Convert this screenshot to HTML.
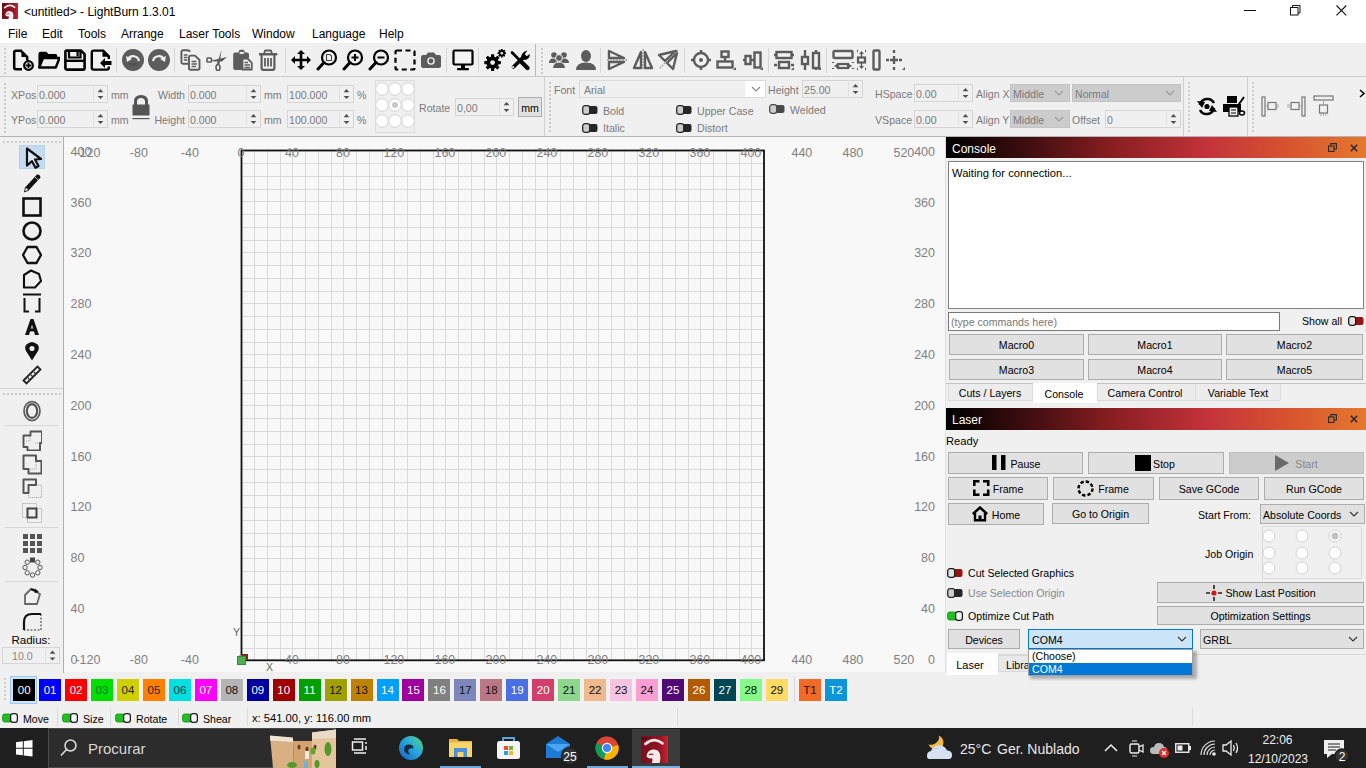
<!DOCTYPE html><html><head><meta charset="utf-8"><title>LightBurn</title><style>
html,body{margin:0;padding:0;}body{width:1366px;height:768px;overflow:hidden;position:relative;background:#f0f0f0;font-family:"Liberation Sans", sans-serif;}
.a{position:absolute;white-space:nowrap;}
</style></head><body>
<div class="a" style="left:0px;top:0px;width:1366px;height:22px;background:#ffffff;"></div>
<svg class="a" style="left:2px;top:3px;" width="16" height="16" viewBox="0 0 24 24"><defs><linearGradient id="lg1" x1="0" y1="0" x2="1" y2="0"><stop offset="0" stop-color="#7a0f1e"/><stop offset="0.7" stop-color="#8e1525"/><stop offset="1" stop-color="#d4202c"/></linearGradient></defs><rect x="0" y="0" width="24" height="24" fill="url(#lg1)"/><path d="M0 1.5 H10 Q4 2 2 4 Z" fill="#2a0508" opacity="0.7"/><path d="M4 7 Q12 0.5 19 6.5" fill="none" stroke="#f6e6e6" stroke-width="2.4" stroke-linecap="round"/><path d="M5 18.5 Q5 13 10 12 Q15 11.5 16.5 15 Q18 19 16.5 24 H9.5 Q11 21 9.5 19.5 Q7.5 21 5 18.5 Z" fill="#f5eaea"/><path d="M7 17 Q9 15.5 11 16.5" stroke="#8e1525" stroke-width="1" fill="none"/></svg>
<div class="a" style="left:24px;top:5.6px;font-size:12px;line-height:12px;color:#000;">&lt;untitled&gt; - LightBurn 1.3.01</div>
<div class="a" style="left:1244px;top:10px;width:12px;height:1px;background:#111;"></div>
<svg class="a" style="left:1290px;top:5px;" width="11" height="11" viewBox="0 0 11 11"><rect x="0.5" y="2.5" width="7.5" height="7.5" fill="none" stroke="#111"/><path d="M2.5 2.5 V0.5 H10 V8 H8" fill="none" stroke="#111"/></svg>
<svg class="a" style="left:1336px;top:5px;" width="11" height="11" viewBox="0 0 11 11"><path d="M0.5 0.5 L10.3 10.3 M10.3 0.5 L0.5 10.3" stroke="#111" stroke-width="1.1"/></svg>
<div class="a" style="left:0px;top:22px;width:1366px;height:21px;background:#ffffff;"></div>
<div class="a" style="left:8px;top:28.3px;font-size:12px;line-height:12px;color:#000;">File</div>
<div class="a" style="left:42px;top:28.3px;font-size:12px;line-height:12px;color:#000;">Edit</div>
<div class="a" style="left:78px;top:28.3px;font-size:12px;line-height:12px;color:#000;">Tools</div>
<div class="a" style="left:121px;top:28.3px;font-size:12px;line-height:12px;color:#000;">Arrange</div>
<div class="a" style="left:179px;top:28.3px;font-size:12px;line-height:12px;color:#000;">Laser Tools</div>
<div class="a" style="left:252px;top:28.3px;font-size:12px;line-height:12px;color:#000;">Window</div>
<div class="a" style="left:312px;top:28.3px;font-size:12px;line-height:12px;color:#000;">Language</div>
<div class="a" style="left:379px;top:28.3px;font-size:12px;line-height:12px;color:#000;">Help</div>
<div class="a" style="left:0px;top:43px;width:1366px;height:33px;background:#f0f0f0;"></div>
<div class="a" style="left:0px;top:76px;width:1366px;height:1px;background:#cacaca;"></div>
<svg class="a" style="left:4px;top:48px;" width="2" height="26" viewBox="0 0 2 26"><rect x="0" y="0" width="2" height="2" fill="#cbcbcb"/><rect x="0" y="4" width="2" height="2" fill="#cbcbcb"/><rect x="0" y="8" width="2" height="2" fill="#cbcbcb"/><rect x="0" y="12" width="2" height="2" fill="#cbcbcb"/><rect x="0" y="16" width="2" height="2" fill="#cbcbcb"/><rect x="0" y="20" width="2" height="2" fill="#cbcbcb"/><rect x="0" y="24" width="2" height="2" fill="#cbcbcb"/></svg>
<svg class="a" style="left:12px;top:49px;" width="22" height="22" viewBox="0 0 22 22"><path d="M10 1.8 H4 Q2.2 1.8 2.2 3.6 V18.5 Q2.2 20.2 4 20.2 H10" fill="none" stroke="#000" stroke-width="2.5"/><path d="M9 1.8 L15.2 8 V11.5" fill="none" stroke="#000" stroke-width="2.5"/><path d="M9.5 1.5 V8 H15.5 Z" fill="#000"/><circle cx="16.5" cy="16.5" r="4.3" fill="#f0f0f0" stroke="#000" stroke-width="2.3"/><path d="M16.5 14 V19 M14 16.5 H19" stroke="#000" stroke-width="1.8"/></svg>
<svg class="a" style="left:38px;top:49px;" width="22" height="22" viewBox="0 0 22 22"><path d="M1.2 18 V5 Q1.2 3.5 2.7 3.5 H8 L10 5.8 H17.5 Q18.5 5.8 18.5 7 V9" fill="#000" stroke="#000" stroke-width="1.5"/><path d="M1.2 18.5 L5 9 H21.5 L17.8 18.5 Z" fill="#f0f0f0" stroke="#000" stroke-width="2.4" stroke-linejoin="round"/></svg>
<svg class="a" style="left:64px;top:49px;" width="22" height="22" viewBox="0 0 22 22"><path d="M2.6 1.6 H17 L20.6 5.2 V19 Q20.6 20.6 19 20.6 H3 Q1.4 20.6 1.4 19 V2.8 Q1.4 1.6 2.6 1.6 Z" fill="none" stroke="#000" stroke-width="2.6"/><path d="M5 1.6 V8.5 H16.5 V1.6" fill="none" stroke="#000" stroke-width="2.2"/><rect x="12.5" y="3" width="2.2" height="4.3" fill="#000"/><rect x="2" y="10.6" width="18" height="2.4" fill="#000"/></svg>
<svg class="a" style="left:90px;top:49px;" width="22" height="22" viewBox="0 0 22 22"><path d="M18.8 10 V7.2 L13.2 1.6 H3.6 Q1.8 1.6 1.8 3.4 V18.8 Q1.8 20.6 3.6 20.6 H17 Q18.8 20.6 18.8 18.8 V17.5" fill="none" stroke="#000" stroke-width="2.4"/><path d="M12.5 1.5 V7.8 H18.8 Z" fill="#000"/><path d="M21.5 12 H15 V9 L10 14 L15 19 V16 H21.5 Z" fill="#000"/></svg>
<svg class="a" style="left:122px;top:49px;" width="22" height="22" viewBox="0 0 22 22"><circle cx="11" cy="11" r="11" fill="#5c5c5c"/><path d="M6 10 A6 6 0 0 1 17 12" fill="none" stroke="#f0f0f0" stroke-width="2.2"/><path d="M4 7 L5 13 L10 10 Z" fill="#f0f0f0"/><path d="M5 14 Q11 20 17 14 Z" fill="#505050"/></svg>
<svg class="a" style="left:148px;top:49px;" width="22" height="22" viewBox="0 0 22 22"><circle cx="11" cy="11" r="11" fill="#5c5c5c"/><path d="M16 10 A6 6 0 0 0 5 12" fill="none" stroke="#f0f0f0" stroke-width="2.2"/><path d="M18 7 L17 13 L12 10 Z" fill="#f0f0f0"/></svg>
<svg class="a" style="left:180px;top:49px;" width="22" height="22" viewBox="0 0 22 22"><path d="M9.5 3 Q9.5 1.2 7.8 1.2 H3.2 Q1.4 1.2 1.4 3 V13 Q1.4 14.8 3.2 14.8 H8" fill="none" stroke="#5c5c5c" stroke-width="1.9"/><path d="M3.8 6 H7.5 M3.8 8.5 H7.5 M3.8 11 H7.5" stroke="#5c5c5c" stroke-width="1.3"/><path d="M9 8.2 Q9 6.6 10.6 6.6 H15 L19.5 11 V19 Q19.5 20.8 17.8 20.8 H10.6 Q9 20.8 9 19 Z" fill="#f0f0f0" stroke="#5c5c5c" stroke-width="1.9" stroke-linejoin="round"/><path d="M11.5 12.5 H16.5 M11.5 15 H17 M11.5 17.5 H16" stroke="#5c5c5c" stroke-width="1.4"/></svg>
<svg class="a" style="left:206px;top:49px;" width="22" height="22" viewBox="0 0 22 22"><rect x="1" y="9" width="4.5" height="4" rx="0.8" fill="#f0f0f0" stroke="#5c5c5c" stroke-width="1.6"/><path d="M5.5 11.5 L21 8 L16 12.5 L8 12.5 Z" fill="#5c5c5c"/><path d="M10.5 16 L15.5 1 L13.5 15 Z" fill="#5c5c5c"/><ellipse cx="12" cy="18.5" rx="2" ry="3" fill="#f0f0f0" stroke="#5c5c5c" stroke-width="1.6"/></svg>
<svg class="a" style="left:232px;top:49px;" width="22" height="22" viewBox="0 0 22 22"><path d="M3 3.5 H7 V2 Q7 0.8 8.2 0.8 H11 Q12.2 0.8 12.2 2 V3.5 H15 Q17 3.5 17 5.5 V9 H10 V21 H3 Q1.2 21 1.2 19 V5.5 Q1.2 3.5 3 3.5 Z" fill="#5c5c5c"/><rect x="7.2" y="2.5" width="5" height="2.8" fill="#f0f0f0" stroke="#5c5c5c" stroke-width="0.8"/><path d="M10.5 9.5 H15.5 L19.8 13.8 V20.5 H10.5 Z" fill="#f0f0f0" stroke="#5c5c5c" stroke-width="1.8" stroke-linejoin="round"/><path d="M12.5 13.5 H16 M12.5 16 H18 M12.5 18.5 H18" stroke="#5c5c5c" stroke-width="1.4"/></svg>
<svg class="a" style="left:259px;top:49px;" width="22" height="22" viewBox="0 0 22 22"><path d="M0.8 5.2 H17.2" stroke="#5c5c5c" stroke-width="2.4" stroke-linecap="round"/><path d="M5.5 5 V2.8 Q5.5 1.5 6.8 1.5 H11.2 Q12.5 1.5 12.5 2.8 V5" fill="none" stroke="#5c5c5c" stroke-width="1.8"/><path d="M2.6 6 V19 Q2.6 20.8 4.4 20.8 H13.6 Q15.4 20.8 15.4 19 V6" fill="none" stroke="#5c5c5c" stroke-width="2.2"/><path d="M6 9 V17.5 M9 9 V17.5 M12 9 V17.5" stroke="#5c5c5c" stroke-width="1.8"/></svg>
<svg class="a" style="left:290px;top:49px;" width="22" height="22" viewBox="0 0 22 22"><path d="M11 1 L15 5 H12.3 V9.7 H17 V7 L21 11 L17 15 V12.3 H12.3 V17 H15 L11 21 L7 17 H9.7 V12.3 H5 V15 L1 11 L5 7 V9.7 H9.7 V5 H7 Z" fill="#000"/></svg>
<svg class="a" style="left:316px;top:49px;" width="22" height="22" viewBox="0 0 22 22"><circle cx="13" cy="8.5" r="7" fill="none" stroke="#000" stroke-width="2.2"/><path d="M8 13.5 L2 20" stroke="#000" stroke-width="3" stroke-linecap="round"/><path d="M10.5 5.5 H14 L15.5 7 V11.5 H10.5 Z" fill="none" stroke="#444" stroke-width="1.1"/></svg>
<svg class="a" style="left:342px;top:49px;" width="22" height="22" viewBox="0 0 22 22"><circle cx="13" cy="8.5" r="7" fill="none" stroke="#000" stroke-width="2.2"/><path d="M8 13.5 L2 20" stroke="#000" stroke-width="3" stroke-linecap="round"/><path d="M13 5 V12 M9.5 8.5 H16.5" stroke="#000" stroke-width="2"/></svg>
<svg class="a" style="left:368px;top:49px;" width="22" height="22" viewBox="0 0 22 22"><circle cx="13" cy="8.5" r="7" fill="none" stroke="#000" stroke-width="2.2"/><path d="M8 13.5 L2 20" stroke="#000" stroke-width="3" stroke-linecap="round"/><path d="M9.5 8.5 H16.5" stroke="#000" stroke-width="2"/></svg>
<svg class="a" style="left:394px;top:49px;" width="22" height="22" viewBox="0 0 22 22"><rect x="1.5" y="1.5" width="19" height="19" rx="1.5" fill="none" stroke="#000" stroke-width="2.2" stroke-dasharray="5 3.5"/></svg>
<svg class="a" style="left:420px;top:49px;" width="22" height="22" viewBox="0 0 22 22"><path d="M1 8 Q1 6 3 6 H6 L8 3.5 H14 L16 6 H19 Q21 6 21 8 V17 Q21 19 19 19 H3 Q1 19 1 17 Z" fill="#5c5c5c"/><circle cx="11" cy="12" r="3.8" fill="#f0f0f0"/><circle cx="11" cy="12" r="2.4" fill="#5c5c5c"/></svg>
<svg class="a" style="left:452px;top:49px;" width="22" height="22" viewBox="0 0 22 22"><rect x="1.5" y="1.5" width="19" height="14" rx="1" fill="#f4f4f4" stroke="#000" stroke-width="2.2"/><rect x="9" y="16" width="4" height="3" fill="#000"/><rect x="5" y="19" width="12" height="2.2" rx="1" fill="#000"/></svg>
<svg class="a" style="left:484px;top:49px;" width="22" height="22" viewBox="0 0 22 22"><rect x="7.00" y="5.30" width="3.20" height="3.60" rx="0.6" fill="#000" transform="rotate(0.0 8.6 13.6)"/><rect x="7.00" y="5.30" width="3.20" height="3.60" rx="0.6" fill="#000" transform="rotate(45.0 8.6 13.6)"/><rect x="7.00" y="5.30" width="3.20" height="3.60" rx="0.6" fill="#000" transform="rotate(90.0 8.6 13.6)"/><rect x="7.00" y="5.30" width="3.20" height="3.60" rx="0.6" fill="#000" transform="rotate(135.0 8.6 13.6)"/><rect x="7.00" y="5.30" width="3.20" height="3.60" rx="0.6" fill="#000" transform="rotate(180.0 8.6 13.6)"/><rect x="7.00" y="5.30" width="3.20" height="3.60" rx="0.6" fill="#000" transform="rotate(225.0 8.6 13.6)"/><rect x="7.00" y="5.30" width="3.20" height="3.60" rx="0.6" fill="#000" transform="rotate(270.0 8.6 13.6)"/><rect x="7.00" y="5.30" width="3.20" height="3.60" rx="0.6" fill="#000" transform="rotate(315.0 8.6 13.6)"/><circle cx="8.6" cy="13.6" r="6.2" fill="#000"/><circle cx="8.6" cy="13.6" r="2.4" fill="#f0f0f0"/><rect x="16.90" y="-0.10" width="1.80" height="2.70" rx="0.6" fill="#000" transform="rotate(0.0 17.8 4.2)"/><rect x="16.90" y="-0.10" width="1.80" height="2.70" rx="0.6" fill="#000" transform="rotate(45.0 17.8 4.2)"/><rect x="16.90" y="-0.10" width="1.80" height="2.70" rx="0.6" fill="#000" transform="rotate(90.0 17.8 4.2)"/><rect x="16.90" y="-0.10" width="1.80" height="2.70" rx="0.6" fill="#000" transform="rotate(135.0 17.8 4.2)"/><rect x="16.90" y="-0.10" width="1.80" height="2.70" rx="0.6" fill="#000" transform="rotate(180.0 17.8 4.2)"/><rect x="16.90" y="-0.10" width="1.80" height="2.70" rx="0.6" fill="#000" transform="rotate(225.0 17.8 4.2)"/><rect x="16.90" y="-0.10" width="1.80" height="2.70" rx="0.6" fill="#000" transform="rotate(270.0 17.8 4.2)"/><rect x="16.90" y="-0.10" width="1.80" height="2.70" rx="0.6" fill="#000" transform="rotate(315.0 17.8 4.2)"/><circle cx="17.8" cy="4.2" r="3.1" fill="#000"/><circle cx="17.8" cy="4.2" r="1.3" fill="#f0f0f0"/></svg>
<svg class="a" style="left:509px;top:49px;" width="22" height="22" viewBox="0 0 22 22"><path d="M3 3.5 L12.5 13" stroke="#000" stroke-width="2.6" stroke-linecap="round"/><path d="M12 12.5 L18.5 19" stroke="#000" stroke-width="4.2" stroke-linecap="round"/><path d="M4.5 18 L14 8.5" stroke="#000" stroke-width="3.6" stroke-linecap="round"/><path d="M12 9 Q12 3 18.5 1.5 L15.8 5 L17.5 7.2 L21 5 Q20.5 11 14.5 11 Z" fill="#000"/><circle cx="4.2" cy="18.2" r="1.1" fill="#f0f0f0"/></svg>
<svg class="a" style="left:548px;top:49px;" width="22" height="22" viewBox="0 0 22 22"><circle cx="6" cy="6" r="2.8" fill="#5c5c5c"/><path d="M1 14 Q1 9 6 9.5 Q9 10 9 14 Z" fill="#5c5c5c"/><circle cx="16" cy="6" r="2.8" fill="#5c5c5c"/><path d="M12 14 Q13 9.5 16 9.5 Q21 9.5 21 14 Z" fill="#5c5c5c"/><circle cx="11" cy="9" r="3.4" fill="#5c5c5c" stroke="#f0f0f0" stroke-width="1"/><path d="M4.5 19.5 Q5 13 11 13 Q17 13 17.5 19.5 Z" fill="#5c5c5c" stroke="#f0f0f0" stroke-width="1"/></svg>
<svg class="a" style="left:575px;top:49px;" width="22" height="22" viewBox="0 0 22 22"><ellipse cx="11" cy="7" rx="5" ry="6" fill="#5c5c5c"/><path d="M1 21 Q1 13.5 11 13.5 Q21 13.5 21 21 Z" fill="#5c5c5c"/></svg>
<svg class="a" style="left:607px;top:49px;" width="22" height="22" viewBox="0 0 22 22"><path d="M2 2 L17 9 H2 Z M2 13 H17 L2 20 Z" fill="none" stroke="#5c5c5c" stroke-width="2.4" stroke-linejoin="round"/><path d="M0 11 H20" stroke="#9a9a9a" stroke-width="1.5" stroke-dasharray="2 1"/></svg>
<svg class="a" style="left:632px;top:49px;" width="22" height="22" viewBox="0 0 22 22"><path d="M9 3 V19 H2 Z M13 3 V19 H20 Z" fill="none" stroke="#5c5c5c" stroke-width="2.4" stroke-linejoin="round"/><path d="M11 0 V21" stroke="#9a9a9a" stroke-width="1.5" stroke-dasharray="2 1"/></svg>
<svg class="a" style="left:657px;top:49px;" width="22" height="22" viewBox="0 0 22 22"><path d="M2 6 L19 2 L8 12 Z M20 4 L16 20 L10 14 Z" fill="none" stroke="#5c5c5c" stroke-width="2.4" stroke-linejoin="round"/><path d="M21 1 L2 20" stroke="#9a9a9a" stroke-width="1.2" stroke-dasharray="2 1"/></svg>
<svg class="a" style="left:690px;top:49px;" width="22" height="22" viewBox="0 0 22 22"><circle cx="11" cy="11" r="7" fill="none" stroke="#5c5c5c" stroke-width="2.4"/><circle cx="11" cy="11" r="2" fill="#5c5c5c"/><path d="M11 1 V4.5 M11 17.5 V21 M1 11 H4.5 M17.5 11 H21" stroke="#5c5c5c" stroke-width="2.4"/></svg>
<svg class="a" style="left:716px;top:49px;" width="22" height="22" viewBox="0 0 22 22"><rect x="5.5" y="2.5" width="7" height="5.5" fill="none" stroke="#5c5c5c" stroke-width="2.4"/><path d="M9 8 V12" stroke="#5c5c5c" stroke-width="2.4"/><rect x="1.5" y="12.5" width="15" height="6" fill="none" stroke="#5c5c5c" stroke-width="2.4"/><path d="M17 21 L20 21 L20 18 Z" fill="#5c5c5c"/></svg>
<svg class="a" style="left:742px;top:49px;" width="22" height="22" viewBox="0 0 22 22"><path d="M1 11 H4" stroke="#5c5c5c" stroke-width="2.4"/><rect x="3.5" y="7" width="5" height="8" fill="none" stroke="#5c5c5c" stroke-width="2.4"/><path d="M8.5 11 H12" stroke="#5c5c5c" stroke-width="2.4"/><rect x="12.5" y="3.5" width="6" height="15" fill="none" stroke="#5c5c5c" stroke-width="2.4"/><path d="M18 21 L21 21 L21 18 Z" fill="#5c5c5c"/></svg>
<svg class="a" style="left:773px;top:49px;" width="22" height="22" viewBox="0 0 22 22"><path d="M1 6 H4 M18 6 H21 M1 16 H4 M18 16 H21" stroke="#5c5c5c" stroke-width="2.4"/><rect x="3.5" y="3" width="15" height="6" fill="none" stroke="#5c5c5c" stroke-width="2.4"/><rect x="6" y="13" width="10" height="6" fill="none" stroke="#5c5c5c" stroke-width="2.4"/><path d="M18 21 L21 21 L21 18 Z" fill="#5c5c5c"/></svg>
<svg class="a" style="left:800px;top:49px;" width="22" height="22" viewBox="0 0 22 22"><path d="M5 1 V21 M16 1 V21" stroke="#5c5c5c" stroke-width="2.4"/><rect x="2" y="8" width="6" height="7" fill="#f0f0f0" stroke="#5c5c5c" stroke-width="2.4"/><rect x="13" y="4" width="6" height="15" fill="#f0f0f0" stroke="#5c5c5c" stroke-width="2.4"/><path d="M18 21 L21 21 L21 18 Z" fill="#5c5c5c"/></svg>
<svg class="a" style="left:832px;top:49px;" width="22" height="22" viewBox="0 0 22 22"><rect x="1.5" y="2" width="19" height="7" rx="1" fill="none" stroke="#5c5c5c" stroke-width="2.4"/><path d="M1 13 V14 M1 19 V20 M21 13 V14 M21 19 V20" stroke="#5c5c5c" stroke-width="2.4"/><path d="M2 17 L5 15 V19 Z M20 17 L17 15 V19 Z" fill="#5c5c5c"/><rect x="6" y="15" width="10" height="4" fill="none" stroke="#5c5c5c" stroke-width="2.2"/></svg>
<svg class="a" style="left:856px;top:49px;" width="22" height="22" viewBox="0 0 22 22"><path d="M1 2 H2 M9 2 H10 M1 20 H2 M9 20 H10" stroke="#5c5c5c" stroke-width="2.4"/><path d="M5.5 2 L3 5 H8 Z M5.5 20 L3 17 H8 Z" fill="#5c5c5c"/><rect x="2" y="8.5" width="7" height="5" fill="none" stroke="#5c5c5c" stroke-width="2.2"/><path d="M5.5 5 V8.5 M5.5 13.5 V17" stroke="#5c5c5c" stroke-width="1.4"/></svg>
<svg class="a" style="left:872px;top:49px;" width="22" height="22" viewBox="0 0 22 22"><rect x="1.5" y="1.5" width="6" height="19" rx="1" fill="none" stroke="#5c5c5c" stroke-width="2.4"/></svg>
<svg class="a" style="left:885px;top:49px;" width="22" height="22" viewBox="0 0 22 22"><path d="M9 1 V4 M9 7 V15 M9 18 V21 M1 11 H4 M5 11 H13 M14 11 H17" stroke="#5c5c5c" stroke-width="2.4"/><path d="M17 21 L20 21 L20 18 Z" fill="#5c5c5c"/></svg>
<div class="a" style="left:116px;top:48px;width:1px;height:25px;background:#d6d6d6;"></div>
<div class="a" style="left:174px;top:48px;width:1px;height:25px;background:#d6d6d6;"></div>
<div class="a" style="left:285px;top:48px;width:1px;height:25px;background:#d6d6d6;"></div>
<div class="a" style="left:446px;top:48px;width:1px;height:25px;background:#d6d6d6;"></div>
<div class="a" style="left:478px;top:48px;width:1px;height:25px;background:#d6d6d6;"></div>
<div class="a" style="left:535px;top:44px;width:1px;height:32px;background:#b8b8b8;"></div>
<svg class="a" style="left:541px;top:48px;" width="2" height="26" viewBox="0 0 2 26"><rect x="0" y="0" width="2" height="2" fill="#cbcbcb"/><rect x="0" y="4" width="2" height="2" fill="#cbcbcb"/><rect x="0" y="8" width="2" height="2" fill="#cbcbcb"/><rect x="0" y="12" width="2" height="2" fill="#cbcbcb"/><rect x="0" y="16" width="2" height="2" fill="#cbcbcb"/><rect x="0" y="20" width="2" height="2" fill="#cbcbcb"/><rect x="0" y="24" width="2" height="2" fill="#cbcbcb"/></svg>
<div class="a" style="left:600px;top:48px;width:1px;height:25px;background:#d6d6d6;"></div>
<div class="a" style="left:684px;top:48px;width:1px;height:25px;background:#d6d6d6;"></div>
<div class="a" style="left:768px;top:48px;width:1px;height:25px;background:#d6d6d6;"></div>
<div class="a" style="left:826px;top:48px;width:1px;height:25px;background:#d6d6d6;"></div>
<div class="a" style="left:0px;top:77px;width:1366px;height:59px;background:#f0f0f0;"></div>
<div class="a" style="left:0px;top:136px;width:1366px;height:1px;background:#b4b4b4;"></div>
<svg class="a" style="left:4px;top:83px;" width="2" height="50" viewBox="0 0 2 50"><rect x="0" y="0" width="2" height="2" fill="#cbcbcb"/><rect x="0" y="4" width="2" height="2" fill="#cbcbcb"/><rect x="0" y="8" width="2" height="2" fill="#cbcbcb"/><rect x="0" y="12" width="2" height="2" fill="#cbcbcb"/><rect x="0" y="16" width="2" height="2" fill="#cbcbcb"/><rect x="0" y="20" width="2" height="2" fill="#cbcbcb"/><rect x="0" y="24" width="2" height="2" fill="#cbcbcb"/><rect x="0" y="28" width="2" height="2" fill="#cbcbcb"/><rect x="0" y="32" width="2" height="2" fill="#cbcbcb"/><rect x="0" y="36" width="2" height="2" fill="#cbcbcb"/><rect x="0" y="40" width="2" height="2" fill="#cbcbcb"/><rect x="0" y="44" width="2" height="2" fill="#cbcbcb"/><rect x="0" y="48" width="2" height="2" fill="#cbcbcb"/></svg>
<div class="a" style="left:11px;top:89.7px;font-size:10.6px;line-height:10.6px;color:#7a7a7a;">XPos</div>
<div class="a" style="left:37px;top:85px;width:71px;height:18px;background:#f0f0f0;border:1px solid #d5d5d5;box-sizing:border-box;"></div>
<div class="a" style="left:39px;top:89.7px;font-size:10.6px;line-height:10.6px;color:#7a7a7a;">0.000</div>
<div class="a" style="left:93px;top:87px;width:1px;height:14px;background:#e0e0e0;"></div>
<svg class="a" style="left:94px;top:85px;" width="14" height="18" viewBox="0 0 14 18"><path d="M3.6 7.2 L6.5 4.1 L9.4 7.2 Z M3.6 11.0 L6.5 14.1 L9.4 11.0 Z" fill="#505050"/></svg>
<div class="a" style="left:11px;top:114.7px;font-size:10.6px;line-height:10.6px;color:#7a7a7a;">YPos</div>
<div class="a" style="left:37px;top:110px;width:71px;height:18px;background:#f0f0f0;border:1px solid #d5d5d5;box-sizing:border-box;"></div>
<div class="a" style="left:39px;top:114.7px;font-size:10.6px;line-height:10.6px;color:#7a7a7a;">0.000</div>
<div class="a" style="left:93px;top:112px;width:1px;height:14px;background:#e0e0e0;"></div>
<svg class="a" style="left:94px;top:110px;" width="14" height="18" viewBox="0 0 14 18"><path d="M3.6 7.2 L6.5 4.1 L9.4 7.2 Z M3.6 11.0 L6.5 14.1 L9.4 11.0 Z" fill="#505050"/></svg>
<div class="a" style="left:111px;top:89.7px;font-size:10.6px;line-height:10.6px;color:#7a7a7a;">mm</div>
<div class="a" style="left:111px;top:114.7px;font-size:10.6px;line-height:10.6px;color:#7a7a7a;">mm</div>
<svg class="a" style="left:131px;top:95px;" width="20" height="25" viewBox="0 0 20 25"><path d="M4.5 10 V6.5 Q4.5 1.5 10 1.5 Q15.5 1.5 15.5 6.5 V10" fill="none" stroke="#555" stroke-width="3"/><rect x="1.5" y="9.5" width="17" height="11" fill="#555"/><rect x="1.5" y="23" width="17" height="1.2" fill="#555"/></svg>
<div class="a" style="left:-15.0px;width:200px;text-align:right;top:89.7px;font-size:10.6px;line-height:10.6px;color:#7a7a7a;">Width</div>
<div class="a" style="left:188px;top:85px;width:73px;height:18px;background:#f0f0f0;border:1px solid #d5d5d5;box-sizing:border-box;"></div>
<div class="a" style="left:190px;top:89.7px;font-size:10.6px;line-height:10.6px;color:#7a7a7a;">0.000</div>
<div class="a" style="left:246px;top:87px;width:1px;height:14px;background:#e0e0e0;"></div>
<svg class="a" style="left:247px;top:85px;" width="14" height="18" viewBox="0 0 14 18"><path d="M3.6 7.2 L6.5 4.1 L9.4 7.2 Z M3.6 11.0 L6.5 14.1 L9.4 11.0 Z" fill="#505050"/></svg>
<div class="a" style="left:-15.0px;width:200px;text-align:right;top:114.7px;font-size:10.6px;line-height:10.6px;color:#7a7a7a;">Height</div>
<div class="a" style="left:188px;top:110px;width:73px;height:18px;background:#f0f0f0;border:1px solid #d5d5d5;box-sizing:border-box;"></div>
<div class="a" style="left:190px;top:114.7px;font-size:10.6px;line-height:10.6px;color:#7a7a7a;">0.000</div>
<div class="a" style="left:246px;top:112px;width:1px;height:14px;background:#e0e0e0;"></div>
<svg class="a" style="left:247px;top:110px;" width="14" height="18" viewBox="0 0 14 18"><path d="M3.6 7.2 L6.5 4.1 L9.4 7.2 Z M3.6 11.0 L6.5 14.1 L9.4 11.0 Z" fill="#505050"/></svg>
<div class="a" style="left:264px;top:89.7px;font-size:10.6px;line-height:10.6px;color:#7a7a7a;">mm</div>
<div class="a" style="left:264px;top:114.7px;font-size:10.6px;line-height:10.6px;color:#7a7a7a;">mm</div>
<div class="a" style="left:287px;top:85px;width:67px;height:18px;background:#f0f0f0;border:1px solid #d5d5d5;box-sizing:border-box;"></div>
<div class="a" style="left:289px;top:89.7px;font-size:10.6px;line-height:10.6px;color:#7a7a7a;">100.000</div>
<div class="a" style="left:339px;top:87px;width:1px;height:14px;background:#e0e0e0;"></div>
<svg class="a" style="left:340px;top:85px;" width="14" height="18" viewBox="0 0 14 18"><path d="M3.6 7.2 L6.5 4.1 L9.4 7.2 Z M3.6 11.0 L6.5 14.1 L9.4 11.0 Z" fill="#505050"/></svg>
<div class="a" style="left:287px;top:110px;width:67px;height:18px;background:#f0f0f0;border:1px solid #d5d5d5;box-sizing:border-box;"></div>
<div class="a" style="left:289px;top:114.7px;font-size:10.6px;line-height:10.6px;color:#7a7a7a;">100.000</div>
<div class="a" style="left:339px;top:112px;width:1px;height:14px;background:#e0e0e0;"></div>
<svg class="a" style="left:340px;top:110px;" width="14" height="18" viewBox="0 0 14 18"><path d="M3.6 7.2 L6.5 4.1 L9.4 7.2 Z M3.6 11.0 L6.5 14.1 L9.4 11.0 Z" fill="#505050"/></svg>
<div class="a" style="left:357px;top:89.7px;font-size:10.6px;line-height:10.6px;color:#7a7a7a;">%</div>
<div class="a" style="left:357px;top:114.7px;font-size:10.6px;line-height:10.6px;color:#7a7a7a;">%</div>
<div class="a" style="left:375px;top:80px;width:40px;height:53px;background:#efefef;border:1px solid #dcdcdc;box-sizing:border-box;"></div>
<svg class="a" style="left:375px;top:82px;" width="14" height="14" viewBox="0 0 14 14"><circle cx="7" cy="7" r="6.3" fill="#fff" stroke="#d2d2d2" stroke-width="1"/></svg>
<svg class="a" style="left:388px;top:82px;" width="14" height="14" viewBox="0 0 14 14"><circle cx="7" cy="7" r="6.3" fill="#fff" stroke="#d2d2d2" stroke-width="1"/></svg>
<svg class="a" style="left:401px;top:82px;" width="14" height="14" viewBox="0 0 14 14"><circle cx="7" cy="7" r="6.3" fill="#fff" stroke="#d2d2d2" stroke-width="1"/></svg>
<svg class="a" style="left:375px;top:98px;" width="14" height="14" viewBox="0 0 14 14"><circle cx="7" cy="7" r="6.3" fill="#fff" stroke="#d2d2d2" stroke-width="1"/></svg>
<svg class="a" style="left:388px;top:98px;" width="14" height="14" viewBox="0 0 14 14"><circle cx="7" cy="7" r="6.3" fill="#fff" stroke="#d2d2d2" stroke-width="1"/><circle cx="7" cy="7" r="3" fill="#c8c8c8"/></svg>
<svg class="a" style="left:401px;top:98px;" width="14" height="14" viewBox="0 0 14 14"><circle cx="7" cy="7" r="6.3" fill="#fff" stroke="#d2d2d2" stroke-width="1"/></svg>
<svg class="a" style="left:375px;top:114px;" width="14" height="14" viewBox="0 0 14 14"><circle cx="7" cy="7" r="6.3" fill="#fff" stroke="#d2d2d2" stroke-width="1"/></svg>
<svg class="a" style="left:388px;top:114px;" width="14" height="14" viewBox="0 0 14 14"><circle cx="7" cy="7" r="6.3" fill="#fff" stroke="#d2d2d2" stroke-width="1"/></svg>
<svg class="a" style="left:401px;top:114px;" width="14" height="14" viewBox="0 0 14 14"><circle cx="7" cy="7" r="6.3" fill="#fff" stroke="#d2d2d2" stroke-width="1"/></svg>
<div class="a" style="left:419px;top:102.7px;font-size:10.6px;line-height:10.6px;color:#7a7a7a;">Rotate</div>
<div class="a" style="left:455px;top:98px;width:59px;height:18px;background:#f0f0f0;border:1px solid #d5d5d5;box-sizing:border-box;"></div>
<div class="a" style="left:457px;top:102.7px;font-size:10.6px;line-height:10.6px;color:#7a7a7a;">0,00</div>
<div class="a" style="left:499px;top:100px;width:1px;height:14px;background:#e0e0e0;"></div>
<svg class="a" style="left:500px;top:98px;" width="14" height="18" viewBox="0 0 14 18"><path d="M3.6 7.2 L6.5 4.1 L9.4 7.2 Z M3.6 11.0 L6.5 14.1 L9.4 11.0 Z" fill="#505050"/></svg>
<div class="a" style="left:518px;top:97px;width:24px;height:20px;background:#e1e1e1;border:1px solid #adadad;box-sizing:border-box;"></div>
<div class="a" style="left:430.0px;width:200px;text-align:center;top:102.7px;font-size:10.6px;line-height:10.6px;color:#000;">mm</div>
<div class="a" style="left:544px;top:77px;width:1px;height:59px;background:#cfcfcf;"></div>
<svg class="a" style="left:549px;top:82px;" width="2" height="51" viewBox="0 0 2 51"><rect x="0" y="0" width="2" height="2" fill="#cbcbcb"/><rect x="0" y="4" width="2" height="2" fill="#cbcbcb"/><rect x="0" y="8" width="2" height="2" fill="#cbcbcb"/><rect x="0" y="12" width="2" height="2" fill="#cbcbcb"/><rect x="0" y="16" width="2" height="2" fill="#cbcbcb"/><rect x="0" y="20" width="2" height="2" fill="#cbcbcb"/><rect x="0" y="24" width="2" height="2" fill="#cbcbcb"/><rect x="0" y="28" width="2" height="2" fill="#cbcbcb"/><rect x="0" y="32" width="2" height="2" fill="#cbcbcb"/><rect x="0" y="36" width="2" height="2" fill="#cbcbcb"/><rect x="0" y="40" width="2" height="2" fill="#cbcbcb"/><rect x="0" y="44" width="2" height="2" fill="#cbcbcb"/><rect x="0" y="48" width="2" height="2" fill="#cbcbcb"/></svg>
<div class="a" style="left:554px;top:85.2px;font-size:10.6px;line-height:10.6px;color:#7a7a7a;">Font</div>
<div class="a" style="left:579px;top:80px;width:187px;height:18px;background:#ffffff;border:1px solid #dcdcdc;box-sizing:border-box;"></div>
<div class="a" style="left:580px;top:81px;width:165px;height:16px;background:#f0f0f0;"></div>
<div class="a" style="left:584px;top:85.2px;font-size:10.6px;line-height:10.6px;color:#7a7a7a;">Arial</div>
<svg class="a" style="left:751px;top:85px;" width="10" height="8" viewBox="0 0 10 8"><path d="M1 2 L5 6 L9 2" fill="none" stroke="#888" stroke-width="1.1"/></svg>
<div class="a" style="left:768px;top:85.2px;font-size:10.6px;line-height:10.6px;color:#7a7a7a;">Height</div>
<div class="a" style="left:802px;top:80px;width:61px;height:18px;background:#f0f0f0;border:1px solid #d5d5d5;box-sizing:border-box;"></div>
<div class="a" style="left:804px;top:84.7px;font-size:10.6px;line-height:10.6px;color:#7a7a7a;">25.00</div>
<div class="a" style="left:848px;top:82px;width:1px;height:14px;background:#e0e0e0;"></div>
<svg class="a" style="left:849px;top:80px;" width="14" height="18" viewBox="0 0 14 18"><path d="M3.6 7.2 L6.5 4.1 L9.4 7.2 Z M3.6 11.0 L6.5 14.1 L9.4 11.0 Z" fill="#505050"/></svg>
<svg class="a" style="left:582px;top:105px;" width="16" height="10" viewBox="0 0 16 10"><rect x="6.5" y="1" width="9" height="8" rx="2" fill="#262626"/><rect x="0.7" y="0.7" width="7" height="8.6" rx="2.3" fill="#cdcdcd" stroke="#262626" stroke-width="1.3"/></svg>
<div class="a" style="left:603px;top:105.7px;font-size:10.6px;line-height:10.6px;color:#7a7a7a;">Bold</div>
<svg class="a" style="left:582px;top:123px;" width="16" height="10" viewBox="0 0 16 10"><rect x="6.5" y="1" width="9" height="8" rx="2" fill="#262626"/><rect x="0.7" y="0.7" width="7" height="8.6" rx="2.3" fill="#cdcdcd" stroke="#262626" stroke-width="1.3"/></svg>
<div class="a" style="left:603px;top:123.2px;font-size:10.6px;line-height:10.6px;color:#7a7a7a;">Italic</div>
<svg class="a" style="left:676px;top:105px;" width="16" height="10" viewBox="0 0 16 10"><rect x="6.5" y="1" width="9" height="8" rx="2" fill="#262626"/><rect x="0.7" y="0.7" width="7" height="8.6" rx="2.3" fill="#cdcdcd" stroke="#262626" stroke-width="1.3"/></svg>
<div class="a" style="left:697px;top:105.7px;font-size:10.6px;line-height:10.6px;color:#7a7a7a;">Upper Case</div>
<svg class="a" style="left:676px;top:123px;" width="16" height="10" viewBox="0 0 16 10"><rect x="6.5" y="1" width="9" height="8" rx="2" fill="#262626"/><rect x="0.7" y="0.7" width="7" height="8.6" rx="2.3" fill="#cdcdcd" stroke="#262626" stroke-width="1.3"/></svg>
<div class="a" style="left:697px;top:123.2px;font-size:10.6px;line-height:10.6px;color:#7a7a7a;">Distort</div>
<svg class="a" style="left:769px;top:104px;" width="16" height="10" viewBox="0 0 16 10"><rect x="6.5" y="1" width="9" height="8" rx="2" fill="#4a4a4a"/><rect x="0.7" y="0.7" width="7" height="8.6" rx="2.3" fill="#cdcdcd" stroke="#4a4a4a" stroke-width="1.3"/></svg>
<div class="a" style="left:790px;top:104.7px;font-size:10.6px;line-height:10.6px;color:#7a7a7a;">Welded</div>
<div class="a" style="left:875px;top:88.7px;font-size:10.6px;line-height:10.6px;color:#7a7a7a;">HSpace</div>
<div class="a" style="left:914px;top:84px;width:59px;height:18px;background:#f0f0f0;border:1px solid #d5d5d5;box-sizing:border-box;"></div>
<div class="a" style="left:916px;top:88.7px;font-size:10.6px;line-height:10.6px;color:#7a7a7a;">0.00</div>
<div class="a" style="left:958px;top:86px;width:1px;height:14px;background:#e0e0e0;"></div>
<svg class="a" style="left:959px;top:84px;" width="14" height="18" viewBox="0 0 14 18"><path d="M3.6 7.2 L6.5 4.1 L9.4 7.2 Z M3.6 11.0 L6.5 14.1 L9.4 11.0 Z" fill="#505050"/></svg>
<div class="a" style="left:875px;top:114.7px;font-size:10.6px;line-height:10.6px;color:#7a7a7a;">VSpace</div>
<div class="a" style="left:914px;top:110px;width:59px;height:18px;background:#f0f0f0;border:1px solid #d5d5d5;box-sizing:border-box;"></div>
<div class="a" style="left:916px;top:114.7px;font-size:10.6px;line-height:10.6px;color:#7a7a7a;">0.00</div>
<div class="a" style="left:958px;top:112px;width:1px;height:14px;background:#e0e0e0;"></div>
<svg class="a" style="left:959px;top:110px;" width="14" height="18" viewBox="0 0 14 18"><path d="M3.6 7.2 L6.5 4.1 L9.4 7.2 Z M3.6 11.0 L6.5 14.1 L9.4 11.0 Z" fill="#505050"/></svg>
<div class="a" style="left:976px;top:88.7px;font-size:10.6px;line-height:10.6px;color:#7a7a7a;">Align X</div>
<div class="a" style="left:976px;top:114.7px;font-size:10.6px;line-height:10.6px;color:#7a7a7a;">Align Y</div>
<div class="a" style="left:1010px;top:84px;width:60px;height:18px;background:#cccccc;border:1px solid #c4c4c4;box-sizing:border-box;"></div>
<div class="a" style="left:1013px;top:88.7px;font-size:10.6px;line-height:10.6px;color:#7a7a7a;">Middle</div>
<svg class="a" style="left:1054px;top:90px;" width="10" height="7" viewBox="0 0 10 7"><path d="M1 1 L5 5 L9 1" fill="none" stroke="#9a9a9a" stroke-width="1.1"/></svg>
<div class="a" style="left:1010px;top:110px;width:60px;height:18px;background:#cccccc;border:1px solid #c4c4c4;box-sizing:border-box;"></div>
<div class="a" style="left:1013px;top:114.7px;font-size:10.6px;line-height:10.6px;color:#7a7a7a;">Middle</div>
<svg class="a" style="left:1054px;top:116px;" width="10" height="7" viewBox="0 0 10 7"><path d="M1 1 L5 5 L9 1" fill="none" stroke="#9a9a9a" stroke-width="1.1"/></svg>
<div class="a" style="left:1072px;top:84px;width:109px;height:18px;background:#cccccc;border:1px solid #c4c4c4;box-sizing:border-box;"></div>
<div class="a" style="left:1075px;top:88.7px;font-size:10.6px;line-height:10.6px;color:#7a7a7a;">Normal</div>
<svg class="a" style="left:1165px;top:90px;" width="10" height="7" viewBox="0 0 10 7"><path d="M1 1 L5 5 L9 1" fill="none" stroke="#9a9a9a" stroke-width="1.1"/></svg>
<div class="a" style="left:1072px;top:114.7px;font-size:10.6px;line-height:10.6px;color:#7a7a7a;">Offset</div>
<div class="a" style="left:1105px;top:110px;width:76px;height:18px;background:#f0f0f0;border:1px solid #d5d5d5;box-sizing:border-box;"></div>
<div class="a" style="left:1107px;top:114.7px;font-size:10.6px;line-height:10.6px;color:#7a7a7a;">0</div>
<div class="a" style="left:1166px;top:112px;width:1px;height:14px;background:#e0e0e0;"></div>
<svg class="a" style="left:1167px;top:110px;" width="14" height="18" viewBox="0 0 14 18"><path d="M3.6 7.2 L6.5 4.1 L9.4 7.2 Z M3.6 11.0 L6.5 14.1 L9.4 11.0 Z" fill="#505050"/></svg>
<div class="a" style="left:1183px;top:77px;width:1px;height:59px;background:#cfcfcf;"></div>
<svg class="a" style="left:1188px;top:82px;" width="2" height="51" viewBox="0 0 2 51"><rect x="0" y="0" width="2" height="2" fill="#cbcbcb"/><rect x="0" y="4" width="2" height="2" fill="#cbcbcb"/><rect x="0" y="8" width="2" height="2" fill="#cbcbcb"/><rect x="0" y="12" width="2" height="2" fill="#cbcbcb"/><rect x="0" y="16" width="2" height="2" fill="#cbcbcb"/><rect x="0" y="20" width="2" height="2" fill="#cbcbcb"/><rect x="0" y="24" width="2" height="2" fill="#cbcbcb"/><rect x="0" y="28" width="2" height="2" fill="#cbcbcb"/><rect x="0" y="32" width="2" height="2" fill="#cbcbcb"/><rect x="0" y="36" width="2" height="2" fill="#cbcbcb"/><rect x="0" y="40" width="2" height="2" fill="#cbcbcb"/><rect x="0" y="44" width="2" height="2" fill="#cbcbcb"/><rect x="0" y="48" width="2" height="2" fill="#cbcbcb"/></svg>
<svg class="a" style="left:1196px;top:96px;" width="22" height="21" viewBox="0 0 22 21"><path d="M4 9 A7.5 7.5 0 0 1 18 7" fill="none" stroke="#000" stroke-width="2.6"/><path d="M1 5 L6 12 L9 6 Z" fill="#000"/><path d="M18 12 A7.5 7.5 0 0 1 4 14" fill="none" stroke="#000" stroke-width="2.6"/><path d="M21 16 L16 9 L13 15 Z" fill="#000"/><circle cx="11" cy="10.5" r="2.6" fill="#000"/></svg>
<svg class="a" style="left:1222px;top:95px;" width="24" height="22" viewBox="0 0 24 22"><rect x="5" y="1" width="10" height="7" fill="#000"/><path d="M1 9 H19 V17 H1 Z" fill="#000"/><rect x="7" y="12" width="9" height="9" fill="#f0f0f0" stroke="#000" stroke-width="1.3"/><path d="M9 15 H14 M9 18 H14" stroke="#000"/><path d="M15 12 L22 2" stroke="#000" stroke-width="2"/><ellipse cx="20" cy="18" rx="2.5" ry="2" fill="none" stroke="#000" stroke-width="1.5"/><path d="M16 13 L19 16" stroke="#000" stroke-width="1.5"/></svg>
<div class="a" style="left:1247px;top:77px;width:1px;height:59px;background:#cfcfcf;"></div>
<svg class="a" style="left:1252px;top:82px;" width="2" height="51" viewBox="0 0 2 51"><rect x="0" y="0" width="2" height="2" fill="#cbcbcb"/><rect x="0" y="4" width="2" height="2" fill="#cbcbcb"/><rect x="0" y="8" width="2" height="2" fill="#cbcbcb"/><rect x="0" y="12" width="2" height="2" fill="#cbcbcb"/><rect x="0" y="16" width="2" height="2" fill="#cbcbcb"/><rect x="0" y="20" width="2" height="2" fill="#cbcbcb"/><rect x="0" y="24" width="2" height="2" fill="#cbcbcb"/><rect x="0" y="28" width="2" height="2" fill="#cbcbcb"/><rect x="0" y="32" width="2" height="2" fill="#cbcbcb"/><rect x="0" y="36" width="2" height="2" fill="#cbcbcb"/><rect x="0" y="40" width="2" height="2" fill="#cbcbcb"/><rect x="0" y="44" width="2" height="2" fill="#cbcbcb"/><rect x="0" y="48" width="2" height="2" fill="#cbcbcb"/></svg>
<svg class="a" style="left:1261px;top:96px;" width="48" height="22" viewBox="0 0 48 22"><rect x="1" y="1" width="3" height="19" fill="none" stroke="#777" stroke-width="1.2"/><rect x="7" y="6.5" width="8" height="7" fill="none" stroke="#777" stroke-width="1.2"/><path d="M4 10 H7 M15 9 H18 M15 11 H18" stroke="#999" stroke-width="0.8"/><rect x="30" y="6.5" width="8" height="7" fill="none" stroke="#777" stroke-width="1.2"/><rect x="41" y="1" width="3" height="19" fill="none" stroke="#777" stroke-width="1.2"/><path d="M38 10 H41 M26 9 H30 M26 11 H30" stroke="#999" stroke-width="0.8"/></svg>
<svg class="a" style="left:1313px;top:95px;" width="22" height="22" viewBox="0 0 22 22"><rect x="1" y="1" width="19" height="4" fill="none" stroke="#777" stroke-width="1.2"/><rect x="6.5" y="10" width="8" height="8" fill="none" stroke="#777" stroke-width="1.2"/><path d="M10.5 5 V10 M8 18 V21 M10.5 18 V21 M13 18 V21" stroke="#999" stroke-width="0.8"/></svg>
<svg class="a" style="left:1359px;top:89px;" width="7" height="9" viewBox="0 0 7 9"><path d="M1 1 L5 4.5 L1 8" fill="none" stroke="#000" stroke-width="1.5"/></svg>
<div class="a" style="left:0px;top:137px;width:63px;height:536px;background:#f0f0f0;"></div>
<div class="a" style="left:63px;top:137px;width:1px;height:536px;background:#b0b0b0;"></div>
<svg class="a" style="left:3px;top:141px;" width="58" height="2" viewBox="0 0 58 2"><rect x="0" y="0" width="2" height="2" fill="#cbcbcb"/><rect x="4" y="0" width="2" height="2" fill="#cbcbcb"/><rect x="8" y="0" width="2" height="2" fill="#cbcbcb"/><rect x="12" y="0" width="2" height="2" fill="#cbcbcb"/><rect x="16" y="0" width="2" height="2" fill="#cbcbcb"/><rect x="20" y="0" width="2" height="2" fill="#cbcbcb"/><rect x="24" y="0" width="2" height="2" fill="#cbcbcb"/><rect x="28" y="0" width="2" height="2" fill="#cbcbcb"/><rect x="32" y="0" width="2" height="2" fill="#cbcbcb"/><rect x="36" y="0" width="2" height="2" fill="#cbcbcb"/><rect x="40" y="0" width="2" height="2" fill="#cbcbcb"/><rect x="44" y="0" width="2" height="2" fill="#cbcbcb"/><rect x="48" y="0" width="2" height="2" fill="#cbcbcb"/><rect x="52" y="0" width="2" height="2" fill="#cbcbcb"/><rect x="56" y="0" width="2" height="2" fill="#cbcbcb"/></svg>
<div class="a" style="left:19px;top:145px;width:26px;height:24px;background:#c5dcf0;border:1px solid #b6d2ea;box-sizing:border-box;"></div>
<svg class="a" style="left:22px;top:147px;" width="22" height="22" viewBox="0 0 22 22"><path d="M5 1.5 L19 12 L13 12.5 L16.5 19 L13.5 20.8 L10 14.2 L5 18.5 Z" fill="#d8e8f8" stroke="#111" stroke-width="2.2" stroke-linejoin="round"/></svg>
<svg class="a" style="left:22px;top:173px;" width="22" height="22" viewBox="0 0 22 22"><path d="M15 1.5 Q18 1 18.5 4.5 L7 17 L2.5 19 L3.5 14 Z" fill="#111"/><path d="M3.5 14 L7 17 L2.5 19 Z" fill="#e8e8e8" stroke="#111" stroke-width="0.8"/><path d="M13 4 L16.5 7.5" stroke="#f0f0f0" stroke-width="0.8"/></svg>
<svg class="a" style="left:22px;top:197px;" width="22" height="22" viewBox="0 0 22 22"><rect x="1.5" y="1.5" width="17" height="17" fill="none" stroke="#111" stroke-width="2.6"/></svg>
<svg class="a" style="left:22px;top:221px;" width="22" height="22" viewBox="0 0 22 22"><circle cx="10" cy="10" r="8.5" fill="none" stroke="#111" stroke-width="2.6"/></svg>
<svg class="a" style="left:22px;top:245px;" width="22" height="22" viewBox="0 0 22 22"><path d="M5.5 2 H14.5 L19 10 L14.5 18 H5.5 L1 10 Z" fill="none" stroke="#111" stroke-width="2.3" stroke-linejoin="round"/></svg>
<svg class="a" style="left:22px;top:269px;" width="22" height="22" viewBox="0 0 22 22"><path d="M9 1.5 L17 5 L19 12 L13 18.5 H2 V6 Z" fill="none" stroke="#111" stroke-width="2.1" stroke-linejoin="round"/></svg>
<svg class="a" style="left:22px;top:293px;" width="22" height="22" viewBox="0 0 22 22"><path d="M1 1.5 H19" stroke="#111" stroke-width="2"/><path d="M2.5 5 V18.5 H7 M13 18.5 H17.5 V5" fill="none" stroke="#111" stroke-width="2"/></svg>
<svg class="a" style="left:22px;top:317px;" width="22" height="22" viewBox="0 0 22 22"><path d="M3 18 L8.5 2 H11.5 L17 18 H13 L12 14.5 H8 L7 18 Z M9 11.5 H11 L10 7.5 Z" fill="#111" fill-rule="evenodd"/></svg>
<svg class="a" style="left:22px;top:341px;" width="22" height="22" viewBox="0 0 22 22"><path d="M10 19.5 L4 10 Q2 6 4.5 3.5 Q10 -1.5 15.5 3.5 Q18 6 16 10 Z" fill="#111"/><circle cx="10" cy="7.5" r="2.5" fill="#f0f0f0"/></svg>
<svg class="a" style="left:22px;top:365px;" width="22" height="22" viewBox="0 0 22 22"><path d="M1.5 15.5 L15.5 1.5 L18.5 4.5 L4.5 18.5 Z" fill="none" stroke="#222" stroke-width="1.8"/><path d="M6 13 L7.5 14.5 M9 10 L10.5 11.5 M12 7 L13.5 8.5" stroke="#222" stroke-width="1.2"/></svg>
<div class="a" style="left:0px;top:388px;width:63px;height:1px;background:#d4d4d4;"></div>
<svg class="a" style="left:3px;top:393px;" width="58" height="2" viewBox="0 0 58 2"><rect x="0" y="0" width="2" height="2" fill="#cbcbcb"/><rect x="4" y="0" width="2" height="2" fill="#cbcbcb"/><rect x="8" y="0" width="2" height="2" fill="#cbcbcb"/><rect x="12" y="0" width="2" height="2" fill="#cbcbcb"/><rect x="16" y="0" width="2" height="2" fill="#cbcbcb"/><rect x="20" y="0" width="2" height="2" fill="#cbcbcb"/><rect x="24" y="0" width="2" height="2" fill="#cbcbcb"/><rect x="28" y="0" width="2" height="2" fill="#cbcbcb"/><rect x="32" y="0" width="2" height="2" fill="#cbcbcb"/><rect x="36" y="0" width="2" height="2" fill="#cbcbcb"/><rect x="40" y="0" width="2" height="2" fill="#cbcbcb"/><rect x="44" y="0" width="2" height="2" fill="#cbcbcb"/><rect x="48" y="0" width="2" height="2" fill="#cbcbcb"/><rect x="52" y="0" width="2" height="2" fill="#cbcbcb"/><rect x="56" y="0" width="2" height="2" fill="#cbcbcb"/></svg>
<svg class="a" style="left:22px;top:400px;" width="20" height="22" viewBox="0 0 20 22"><ellipse cx="10" cy="11" rx="8" ry="9.5" fill="none" stroke="#555" stroke-width="1.6"/><ellipse cx="10" cy="11" rx="5.2" ry="6.8" fill="none" stroke="#555" stroke-width="2.2"/></svg>
<div class="a" style="left:5px;top:425px;width:53px;height:1px;background:#d6d6d6;"></div>
<svg class="a" style="left:22px;top:430px;" width="20" height="21" viewBox="0 0 20 21"><path d="M4 11 H8 V5 M13 13 H18" fill="none" stroke="#999" stroke-width="0.8" stroke-dasharray="1.2 0.8"/><path d="M8.5 1.5 H20 V13 H18 V20.5 H5.5 V17 H1.5 V5.5 H8.5 Z" fill="none" stroke="#555" stroke-width="1.9" stroke-linejoin="round"/></svg>
<svg class="a" style="left:22px;top:454px;" width="20" height="21" viewBox="0 0 20 21"><path d="M6 15 H14 V7" fill="none" stroke="#999" stroke-width="0.8" stroke-dasharray="1.2 0.8"/><path d="M1.5 1.5 H14 V7 H19.5 V19.5 H6.5 V15 H1.5 Z" fill="none" stroke="#555" stroke-width="2" stroke-linejoin="round"/></svg>
<svg class="a" style="left:22px;top:478px;" width="20" height="21" viewBox="0 0 20 21"><path d="M6.5 15 V19.5 H19.5 V7 H14" fill="none" stroke="#999" stroke-width="0.8" stroke-dasharray="1.2 0.8"/><path d="M1.5 1.5 H14 V7 H6.5 V15 H1.5 Z" fill="none" stroke="#555" stroke-width="2" stroke-linejoin="round"/></svg>
<svg class="a" style="left:22px;top:503px;" width="20" height="21" viewBox="0 0 20 21"><rect x="0.5" y="0.5" width="14" height="14" fill="none" stroke="#999" stroke-width="0.8" stroke-dasharray="1.2 0.8"/><rect x="5.5" y="5.5" width="14" height="14" fill="none" stroke="#999" stroke-width="0.8" stroke-dasharray="1.2 0.8"/><rect x="5.5" y="5.5" width="9" height="9" fill="none" stroke="#444" stroke-width="2"/></svg>
<div class="a" style="left:5px;top:527px;width:53px;height:1px;background:#d6d6d6;"></div>
<svg class="a" style="left:22px;top:533px;" width="21" height="21" viewBox="0 0 21 21"><rect x="1" y="1" width="5" height="5" fill="#555"/><rect x="1" y="8" width="5" height="5" fill="#555"/><rect x="1" y="15" width="5" height="5" fill="#555"/><rect x="8" y="1" width="5" height="5" fill="#555"/><rect x="8" y="8" width="5" height="5" fill="#555"/><rect x="8" y="15" width="5" height="5" fill="#555"/><rect x="15" y="1" width="5" height="5" fill="#555"/><rect x="15" y="8" width="5" height="5" fill="#555"/><rect x="15" y="15" width="5" height="5" fill="#555"/></svg>
<svg class="a" style="left:22px;top:557px;" width="21" height="21" viewBox="0 0 21 21"><rect x="8.0" y="0.5" width="5" height="5" fill="#444"/><circle cx="15.8" cy="5.2" r="2.2" fill="#f0f0f0" stroke="#555" stroke-width="1"/><circle cx="18.0" cy="10.5" r="2.2" fill="#f0f0f0" stroke="#555" stroke-width="1"/><circle cx="15.8" cy="15.8" r="2.2" fill="#f0f0f0" stroke="#555" stroke-width="1"/><circle cx="10.5" cy="18.0" r="2.2" fill="#f0f0f0" stroke="#555" stroke-width="1"/><circle cx="5.2" cy="15.8" r="2.2" fill="#f0f0f0" stroke="#555" stroke-width="1"/><circle cx="3.0" cy="10.5" r="2.2" fill="#f0f0f0" stroke="#555" stroke-width="1"/><circle cx="5.2" cy="5.2" r="2.2" fill="#f0f0f0" stroke="#555" stroke-width="1"/></svg>
<div class="a" style="left:5px;top:581px;width:53px;height:1px;background:#d6d6d6;"></div>
<svg class="a" style="left:22px;top:587px;" width="21" height="21" viewBox="0 0 21 21"><path d="M9 2 L18 7 L15 17 H3 V8 Z" fill="none" stroke="#666" stroke-width="1.8" stroke-linejoin="round"/><path d="M9 2 L14 4" stroke="#111" stroke-width="2"/><path d="M13 1.5 L17 5 L12.5 6 Z" fill="#111"/></svg>
<svg class="a" style="left:22px;top:611px;" width="21" height="21" viewBox="0 0 21 21"><path d="M2 19 V11 Q2 3 10 3 H19" fill="none" stroke="#111" stroke-width="2.2"/><path d="M19 3 V19 H2" fill="none" stroke="#333" stroke-width="1" stroke-dasharray="2 1.5"/></svg>
<div class="a" style="left:-69.0px;width:200px;text-align:center;top:634.8px;font-size:11.5px;line-height:11.5px;color:#000;">Radius:</div>
<div class="a" style="left:2px;top:647px;width:58px;height:17px;background:#f0f0f0;border:1px solid #d5d5d5;box-sizing:border-box;"></div>
<div class="a" style="left:45px;top:649px;width:1px;height:13px;background:#e0e0e0;"></div>
<svg class="a" style="left:46px;top:647px;" width="14" height="17" viewBox="0 0 14 17"><path d="M3.6 6.7 L6.5 3.6 L9.4 6.7 Z M3.6 10.5 L6.5 13.6 L9.4 10.5 Z" fill="#505050"/></svg>
<div class="a" style="left:12px;top:651.2px;font-size:10.6px;line-height:10.6px;color:#888;">10.0</div>
<div class="a" style="left:64px;top:137px;width:881px;height:535px;background:#f8f8f8;"></div>
<div class="a" style="left:945px;top:137px;width:1px;height:535px;background:#e0e0e0;"></div>
<svg class="a" style="left:0px;top:0px;left:0;top:0;" width="1366" height="768" viewBox="0 0 1366 768"><path d="M254.5 151 V660" stroke="#dadada" stroke-width="1"/><path d="M267.5 151 V660" stroke="#dadada" stroke-width="1"/><path d="M280.5 151 V660" stroke="#dadada" stroke-width="1"/><path d="M292.5 151 V660" stroke="#dadada" stroke-width="1"/><path d="M305.5 151 V660" stroke="#dadada" stroke-width="1"/><path d="M318.5 151 V660" stroke="#dadada" stroke-width="1"/><path d="M331.5 151 V660" stroke="#dadada" stroke-width="1"/><path d="M343.5 151 V660" stroke="#dadada" stroke-width="1"/><path d="M356.5 151 V660" stroke="#dadada" stroke-width="1"/><path d="M369.5 151 V660" stroke="#dadada" stroke-width="1"/><path d="M382.5 151 V660" stroke="#dadada" stroke-width="1"/><path d="M394.5 151 V660" stroke="#dadada" stroke-width="1"/><path d="M407.5 151 V660" stroke="#dadada" stroke-width="1"/><path d="M420.5 151 V660" stroke="#dadada" stroke-width="1"/><path d="M433.5 151 V660" stroke="#dadada" stroke-width="1"/><path d="M445.5 151 V660" stroke="#dadada" stroke-width="1"/><path d="M458.5 151 V660" stroke="#dadada" stroke-width="1"/><path d="M471.5 151 V660" stroke="#dadada" stroke-width="1"/><path d="M484.5 151 V660" stroke="#dadada" stroke-width="1"/><path d="M496.5 151 V660" stroke="#dadada" stroke-width="1"/><path d="M509.5 151 V660" stroke="#dadada" stroke-width="1"/><path d="M522.5 151 V660" stroke="#dadada" stroke-width="1"/><path d="M535.5 151 V660" stroke="#dadada" stroke-width="1"/><path d="M547.5 151 V660" stroke="#dadada" stroke-width="1"/><path d="M560.5 151 V660" stroke="#dadada" stroke-width="1"/><path d="M573.5 151 V660" stroke="#dadada" stroke-width="1"/><path d="M586.5 151 V660" stroke="#dadada" stroke-width="1"/><path d="M598.5 151 V660" stroke="#dadada" stroke-width="1"/><path d="M611.5 151 V660" stroke="#dadada" stroke-width="1"/><path d="M624.5 151 V660" stroke="#dadada" stroke-width="1"/><path d="M637.5 151 V660" stroke="#dadada" stroke-width="1"/><path d="M649.5 151 V660" stroke="#dadada" stroke-width="1"/><path d="M662.5 151 V660" stroke="#dadada" stroke-width="1"/><path d="M675.5 151 V660" stroke="#dadada" stroke-width="1"/><path d="M688.5 151 V660" stroke="#dadada" stroke-width="1"/><path d="M700.5 151 V660" stroke="#dadada" stroke-width="1"/><path d="M713.5 151 V660" stroke="#dadada" stroke-width="1"/><path d="M726.5 151 V660" stroke="#dadada" stroke-width="1"/><path d="M739.5 151 V660" stroke="#dadada" stroke-width="1"/><path d="M751.5 151 V660" stroke="#dadada" stroke-width="1"/><path d="M242 648.5 H764" stroke="#dadada" stroke-width="1"/><path d="M242 635.5 H764" stroke="#dadada" stroke-width="1"/><path d="M242 622.5 H764" stroke="#dadada" stroke-width="1"/><path d="M242 609.5 H764" stroke="#dadada" stroke-width="1"/><path d="M242 597.5 H764" stroke="#dadada" stroke-width="1"/><path d="M242 584.5 H764" stroke="#dadada" stroke-width="1"/><path d="M242 571.5 H764" stroke="#dadada" stroke-width="1"/><path d="M242 558.5 H764" stroke="#dadada" stroke-width="1"/><path d="M242 546.5 H764" stroke="#dadada" stroke-width="1"/><path d="M242 533.5 H764" stroke="#dadada" stroke-width="1"/><path d="M242 520.5 H764" stroke="#dadada" stroke-width="1"/><path d="M242 507.5 H764" stroke="#dadada" stroke-width="1"/><path d="M242 495.5 H764" stroke="#dadada" stroke-width="1"/><path d="M242 482.5 H764" stroke="#dadada" stroke-width="1"/><path d="M242 469.5 H764" stroke="#dadada" stroke-width="1"/><path d="M242 456.5 H764" stroke="#dadada" stroke-width="1"/><path d="M242 444.5 H764" stroke="#dadada" stroke-width="1"/><path d="M242 431.5 H764" stroke="#dadada" stroke-width="1"/><path d="M242 418.5 H764" stroke="#dadada" stroke-width="1"/><path d="M242 405.5 H764" stroke="#dadada" stroke-width="1"/><path d="M242 393.5 H764" stroke="#dadada" stroke-width="1"/><path d="M242 380.5 H764" stroke="#dadada" stroke-width="1"/><path d="M242 367.5 H764" stroke="#dadada" stroke-width="1"/><path d="M242 354.5 H764" stroke="#dadada" stroke-width="1"/><path d="M242 342.5 H764" stroke="#dadada" stroke-width="1"/><path d="M242 329.5 H764" stroke="#dadada" stroke-width="1"/><path d="M242 316.5 H764" stroke="#dadada" stroke-width="1"/><path d="M242 303.5 H764" stroke="#dadada" stroke-width="1"/><path d="M242 291.5 H764" stroke="#dadada" stroke-width="1"/><path d="M242 278.5 H764" stroke="#dadada" stroke-width="1"/><path d="M242 265.5 H764" stroke="#dadada" stroke-width="1"/><path d="M242 252.5 H764" stroke="#dadada" stroke-width="1"/><path d="M242 240.5 H764" stroke="#dadada" stroke-width="1"/><path d="M242 227.5 H764" stroke="#dadada" stroke-width="1"/><path d="M242 214.5 H764" stroke="#dadada" stroke-width="1"/><path d="M242 201.5 H764" stroke="#dadada" stroke-width="1"/><path d="M242 189.5 H764" stroke="#dadada" stroke-width="1"/><path d="M242 176.5 H764" stroke="#dadada" stroke-width="1"/><path d="M242 163.5 H764" stroke="#dadada" stroke-width="1"/><rect x="241.5" y="150.5" width="522.5" height="509.8" fill="none" stroke="#111" stroke-width="1.8"/></svg>
<div class="a" style="left:57.9px;width:60px;text-align:center;top:147.2px;font-size:12.5px;line-height:12.5px;color:#7f7f7f;">-120</div>
<div class="a" style="left:57.9px;width:60px;text-align:center;top:654.2px;font-size:12.5px;line-height:12.5px;color:#7f7f7f;">-120</div>
<div class="a" style="left:108.9px;width:60px;text-align:center;top:147.2px;font-size:12.5px;line-height:12.5px;color:#7f7f7f;">-80</div>
<div class="a" style="left:108.9px;width:60px;text-align:center;top:654.2px;font-size:12.5px;line-height:12.5px;color:#7f7f7f;">-80</div>
<div class="a" style="left:159.9px;width:60px;text-align:center;top:147.2px;font-size:12.5px;line-height:12.5px;color:#7f7f7f;">-40</div>
<div class="a" style="left:159.9px;width:60px;text-align:center;top:654.2px;font-size:12.5px;line-height:12.5px;color:#7f7f7f;">-40</div>
<div class="a" style="left:210.9px;width:60px;text-align:center;top:147.2px;font-size:12.5px;line-height:12.5px;color:#7f7f7f;">0</div>
<div class="a" style="left:210.9px;width:60px;text-align:center;top:654.2px;font-size:12.5px;line-height:12.5px;color:#7f7f7f;">0</div>
<div class="a" style="left:261.9px;width:60px;text-align:center;top:147.2px;font-size:12.5px;line-height:12.5px;color:#7f7f7f;">40</div>
<div class="a" style="left:261.9px;width:60px;text-align:center;top:654.2px;font-size:12.5px;line-height:12.5px;color:#7f7f7f;">40</div>
<div class="a" style="left:312.9px;width:60px;text-align:center;top:147.2px;font-size:12.5px;line-height:12.5px;color:#7f7f7f;">80</div>
<div class="a" style="left:312.9px;width:60px;text-align:center;top:654.2px;font-size:12.5px;line-height:12.5px;color:#7f7f7f;">80</div>
<div class="a" style="left:363.9px;width:60px;text-align:center;top:147.2px;font-size:12.5px;line-height:12.5px;color:#7f7f7f;">120</div>
<div class="a" style="left:363.9px;width:60px;text-align:center;top:654.2px;font-size:12.5px;line-height:12.5px;color:#7f7f7f;">120</div>
<div class="a" style="left:414.9px;width:60px;text-align:center;top:147.2px;font-size:12.5px;line-height:12.5px;color:#7f7f7f;">160</div>
<div class="a" style="left:414.9px;width:60px;text-align:center;top:654.2px;font-size:12.5px;line-height:12.5px;color:#7f7f7f;">160</div>
<div class="a" style="left:465.9px;width:60px;text-align:center;top:147.2px;font-size:12.5px;line-height:12.5px;color:#7f7f7f;">200</div>
<div class="a" style="left:465.9px;width:60px;text-align:center;top:654.2px;font-size:12.5px;line-height:12.5px;color:#7f7f7f;">200</div>
<div class="a" style="left:516.9px;width:60px;text-align:center;top:147.2px;font-size:12.5px;line-height:12.5px;color:#7f7f7f;">240</div>
<div class="a" style="left:516.9px;width:60px;text-align:center;top:654.2px;font-size:12.5px;line-height:12.5px;color:#7f7f7f;">240</div>
<div class="a" style="left:567.9px;width:60px;text-align:center;top:147.2px;font-size:12.5px;line-height:12.5px;color:#7f7f7f;">280</div>
<div class="a" style="left:567.9px;width:60px;text-align:center;top:654.2px;font-size:12.5px;line-height:12.5px;color:#7f7f7f;">280</div>
<div class="a" style="left:618.9px;width:60px;text-align:center;top:147.2px;font-size:12.5px;line-height:12.5px;color:#7f7f7f;">320</div>
<div class="a" style="left:618.9px;width:60px;text-align:center;top:654.2px;font-size:12.5px;line-height:12.5px;color:#7f7f7f;">320</div>
<div class="a" style="left:669.9px;width:60px;text-align:center;top:147.2px;font-size:12.5px;line-height:12.5px;color:#7f7f7f;">360</div>
<div class="a" style="left:669.9px;width:60px;text-align:center;top:654.2px;font-size:12.5px;line-height:12.5px;color:#7f7f7f;">360</div>
<div class="a" style="left:720.9px;width:60px;text-align:center;top:147.2px;font-size:12.5px;line-height:12.5px;color:#7f7f7f;">400</div>
<div class="a" style="left:720.9px;width:60px;text-align:center;top:654.2px;font-size:12.5px;line-height:12.5px;color:#7f7f7f;">400</div>
<div class="a" style="left:771.9px;width:60px;text-align:center;top:147.2px;font-size:12.5px;line-height:12.5px;color:#7f7f7f;">440</div>
<div class="a" style="left:771.9px;width:60px;text-align:center;top:654.2px;font-size:12.5px;line-height:12.5px;color:#7f7f7f;">440</div>
<div class="a" style="left:822.9px;width:60px;text-align:center;top:147.2px;font-size:12.5px;line-height:12.5px;color:#7f7f7f;">480</div>
<div class="a" style="left:822.9px;width:60px;text-align:center;top:654.2px;font-size:12.5px;line-height:12.5px;color:#7f7f7f;">480</div>
<div class="a" style="left:873.9px;width:60px;text-align:center;top:147.2px;font-size:12.5px;line-height:12.5px;color:#7f7f7f;">520</div>
<div class="a" style="left:873.9px;width:60px;text-align:center;top:654.2px;font-size:12.5px;line-height:12.5px;color:#7f7f7f;">520</div>
<div class="a" style="left:70.5px;top:653.8px;font-size:12.5px;line-height:12.5px;color:#7f7f7f;">0</div>
<div class="a" style="left:735.0px;width:200px;text-align:right;top:653.8px;font-size:12.5px;line-height:12.5px;color:#7f7f7f;">0</div>
<div class="a" style="left:70.5px;top:603.0px;font-size:12.5px;line-height:12.5px;color:#7f7f7f;">40</div>
<div class="a" style="left:735.0px;width:200px;text-align:right;top:603.0px;font-size:12.5px;line-height:12.5px;color:#7f7f7f;">40</div>
<div class="a" style="left:70.5px;top:552.2px;font-size:12.5px;line-height:12.5px;color:#7f7f7f;">80</div>
<div class="a" style="left:735.0px;width:200px;text-align:right;top:552.2px;font-size:12.5px;line-height:12.5px;color:#7f7f7f;">80</div>
<div class="a" style="left:70.5px;top:501.4px;font-size:12.5px;line-height:12.5px;color:#7f7f7f;">120</div>
<div class="a" style="left:735.0px;width:200px;text-align:right;top:501.4px;font-size:12.5px;line-height:12.5px;color:#7f7f7f;">120</div>
<div class="a" style="left:70.5px;top:450.6px;font-size:12.5px;line-height:12.5px;color:#7f7f7f;">160</div>
<div class="a" style="left:735.0px;width:200px;text-align:right;top:450.6px;font-size:12.5px;line-height:12.5px;color:#7f7f7f;">160</div>
<div class="a" style="left:70.5px;top:399.8px;font-size:12.5px;line-height:12.5px;color:#7f7f7f;">200</div>
<div class="a" style="left:735.0px;width:200px;text-align:right;top:399.8px;font-size:12.5px;line-height:12.5px;color:#7f7f7f;">200</div>
<div class="a" style="left:70.5px;top:349.0px;font-size:12.5px;line-height:12.5px;color:#7f7f7f;">240</div>
<div class="a" style="left:735.0px;width:200px;text-align:right;top:349.0px;font-size:12.5px;line-height:12.5px;color:#7f7f7f;">240</div>
<div class="a" style="left:70.5px;top:298.2px;font-size:12.5px;line-height:12.5px;color:#7f7f7f;">280</div>
<div class="a" style="left:735.0px;width:200px;text-align:right;top:298.2px;font-size:12.5px;line-height:12.5px;color:#7f7f7f;">280</div>
<div class="a" style="left:70.5px;top:247.4px;font-size:12.5px;line-height:12.5px;color:#7f7f7f;">320</div>
<div class="a" style="left:735.0px;width:200px;text-align:right;top:247.4px;font-size:12.5px;line-height:12.5px;color:#7f7f7f;">320</div>
<div class="a" style="left:70.5px;top:196.5px;font-size:12.5px;line-height:12.5px;color:#7f7f7f;">360</div>
<div class="a" style="left:735.0px;width:200px;text-align:right;top:196.5px;font-size:12.5px;line-height:12.5px;color:#7f7f7f;">360</div>
<div class="a" style="left:70.5px;top:145.7px;font-size:12.5px;line-height:12.5px;color:#7f7f7f;">400</div>
<div class="a" style="left:735.0px;width:200px;text-align:right;top:145.7px;font-size:12.5px;line-height:12.5px;color:#7f7f7f;">400</div>
<div class="a" style="left:237px;top:656px;width:9px;height:9px;background:#4caf50;border:1px solid #3a8a3a;box-sizing:border-box;"></div>
<div class="a" style="left:242px;top:654px;width:6px;height:6px;background:#7a2a1a;"></div>
<div class="a" style="left:237px;top:656px;width:9px;height:9px;background:#4caf50;border:1px solid #3a8a3a;box-sizing:border-box;"></div>
<div class="a" style="left:233px;top:626.7px;font-size:10.6px;line-height:10.6px;color:#666;">Y</div>
<div class="a" style="left:266px;top:661.7px;font-size:10.6px;line-height:10.6px;color:#666;">X</div>
<div class="a" style="left:946px;top:137px;width:420px;height:539px;background:#f0f0f0;"></div>
<div class="a" style="left:946px;top:137px;width:420px;height:21px;background:linear-gradient(90deg,#000000 0%,#3a0c0e 18%,#8a1e22 40%,#c3323a 62%,#d65030 80%,#e6782e 100%);"></div>
<div class="a" style="left:952px;top:142.5px;font-size:12px;line-height:12px;color:#ffffff;">Console</div>
<svg class="a" style="left:1328px;top:142.5px;" width="9" height="9" viewBox="0 0 9 9"><rect x="0.5" y="3" width="5.5" height="5.5" fill="none" stroke="#2a2a2a" stroke-width="1.1"/><path d="M2.8 3 V0.6 H8.4 V6 H6" fill="none" stroke="#2a2a2a" stroke-width="1.1"/></svg>
<svg class="a" style="left:1350px;top:143.5px;" width="8" height="8" viewBox="0 0 8 8"><path d="M0.8 0.8 L7.2 7.2 M7.2 0.8 L0.8 7.2" stroke="#2a2a2a" stroke-width="1.6"/></svg>
<div class="a" style="left:948px;top:161px;width:416px;height:148px;background:#ffffff;border:1px solid #828282;box-sizing:border-box;"></div>
<div class="a" style="left:952px;top:168.4px;font-size:11.2px;line-height:11.2px;color:#000;">Waiting for connection...</div>
<div class="a" style="left:948px;top:312px;width:332px;height:19px;background:#ffffff;border:1px solid #7a7a7a;box-sizing:border-box;"></div>
<div class="a" style="left:951px;top:317.2px;font-size:10.6px;line-height:10.6px;color:#777;">(type commands here)</div>
<div class="a" style="left:1302px;top:316.2px;font-size:10.6px;line-height:10.6px;color:#000;">Show all</div>
<svg class="a" style="left:1348px;top:316px;" width="16" height="10" viewBox="0 0 16 10"><rect x="6.5" y="1" width="9" height="8" rx="2" fill="#9c1212"/><rect x="0.7" y="0.7" width="7" height="8.6" rx="2.3" fill="#e4e4e4" stroke="#1a1a1a" stroke-width="1.3"/></svg>
<div class="a" style="left:949px;top:334px;width:135px;height:21px;background:#e1e1e1;border:1px solid #adadad;box-sizing:border-box;"></div>
<div class="a" style="left:916.5px;width:200px;text-align:center;top:340.2px;font-size:10.6px;line-height:10.6px;color:#000;">Macro0</div>
<div class="a" style="left:949px;top:359px;width:135px;height:21px;background:#e1e1e1;border:1px solid #adadad;box-sizing:border-box;"></div>
<div class="a" style="left:916.5px;width:200px;text-align:center;top:365.2px;font-size:10.6px;line-height:10.6px;color:#000;">Macro3</div>
<div class="a" style="left:1088px;top:334px;width:134px;height:21px;background:#e1e1e1;border:1px solid #adadad;box-sizing:border-box;"></div>
<div class="a" style="left:1055.0px;width:200px;text-align:center;top:340.2px;font-size:10.6px;line-height:10.6px;color:#000;">Macro1</div>
<div class="a" style="left:1088px;top:359px;width:134px;height:21px;background:#e1e1e1;border:1px solid #adadad;box-sizing:border-box;"></div>
<div class="a" style="left:1055.0px;width:200px;text-align:center;top:365.2px;font-size:10.6px;line-height:10.6px;color:#000;">Macro4</div>
<div class="a" style="left:1226px;top:334px;width:137px;height:21px;background:#e1e1e1;border:1px solid #adadad;box-sizing:border-box;"></div>
<div class="a" style="left:1194.5px;width:200px;text-align:center;top:340.2px;font-size:10.6px;line-height:10.6px;color:#000;">Macro2</div>
<div class="a" style="left:1226px;top:359px;width:137px;height:21px;background:#e1e1e1;border:1px solid #adadad;box-sizing:border-box;"></div>
<div class="a" style="left:1194.5px;width:200px;text-align:center;top:365.2px;font-size:10.6px;line-height:10.6px;color:#000;">Macro5</div>
<div class="a" style="left:946px;top:383px;width:420px;height:1px;background:#c4c4c4;"></div>
<div class="a" style="left:948px;top:384px;width:332px;height:17px;background:#ececec;"></div>
<div class="a" style="left:948px;top:400px;width:332px;height:1px;background:#dadada;"></div>
<div class="a" style="left:948px;top:384px;width:1px;height:16px;background:#dcdcdc;"></div>
<div class="a" style="left:1032px;top:384px;width:1px;height:16px;background:#dcdcdc;"></div>
<div class="a" style="left:1097px;top:384px;width:1px;height:16px;background:#dcdcdc;"></div>
<div class="a" style="left:1195px;top:384px;width:1px;height:16px;background:#dcdcdc;"></div>
<div class="a" style="left:1280px;top:384px;width:1px;height:16px;background:#dcdcdc;"></div>
<div class="a" style="left:890.0px;width:200px;text-align:center;top:388.2px;font-size:10.6px;line-height:10.6px;color:#000;">Cuts / Layers</div>
<div class="a" style="left:1033px;top:383px;width:64px;height:20px;background:#ffffff;"></div>
<div class="a" style="left:964.0px;width:200px;text-align:center;top:388.7px;font-size:10.6px;line-height:10.6px;color:#000;">Console</div>
<div class="a" style="left:1045.0px;width:200px;text-align:center;top:388.2px;font-size:10.6px;line-height:10.6px;color:#000;">Camera Control</div>
<div class="a" style="left:1138.0px;width:200px;text-align:center;top:388.2px;font-size:10.6px;line-height:10.6px;color:#000;">Variable Text</div>
<div class="a" style="left:946px;top:408px;width:420px;height:22px;background:linear-gradient(90deg,#000000 0%,#3a0c0e 18%,#8a1e22 40%,#c3323a 62%,#d65030 80%,#e6782e 100%);"></div>
<div class="a" style="left:952px;top:414.0px;font-size:12px;line-height:12px;color:#ffffff;">Laser</div>
<svg class="a" style="left:1328px;top:414.0px;" width="9" height="9" viewBox="0 0 9 9"><rect x="0.5" y="3" width="5.5" height="5.5" fill="none" stroke="#2a2a2a" stroke-width="1.1"/><path d="M2.8 3 V0.6 H8.4 V6 H6" fill="none" stroke="#2a2a2a" stroke-width="1.1"/></svg>
<svg class="a" style="left:1350px;top:415.0px;" width="8" height="8" viewBox="0 0 8 8"><path d="M0.8 0.8 L7.2 7.2 M7.2 0.8 L0.8 7.2" stroke="#2a2a2a" stroke-width="1.6"/></svg>
<div class="a" style="left:946px;top:436.4px;font-size:11.2px;line-height:11.2px;color:#000;">Ready</div>
<div class="a" style="left:948px;top:452px;width:135px;height:22px;background:#e1e1e1;border:1px solid #adadad;box-sizing:border-box;"></div>
<div class="a" style="left:925.5px;width:200px;text-align:center;top:458.7px;font-size:10.6px;line-height:10.6px;color:#000;">Pause</div>
<svg class="a" style="left:992px;top:455px;" width="14" height="15" viewBox="0 0 14 15"><rect x="0" y="0" width="4.5" height="15" fill="#000"/><rect x="9" y="0" width="4.5" height="15" fill="#000"/></svg>
<div class="a" style="left:1088px;top:452px;width:136px;height:22px;background:#e1e1e1;border:1px solid #adadad;box-sizing:border-box;"></div>
<div class="a" style="left:1064.0px;width:200px;text-align:center;top:458.7px;font-size:10.6px;line-height:10.6px;color:#000;">Stop</div>
<div class="a" style="left:1135px;top:455px;width:16px;height:16px;background:#000;"></div>
<div class="a" style="left:1229px;top:452px;width:135px;height:22px;background:#cccccc;border:1px solid #bfbfbf;box-sizing:border-box;"></div>
<div class="a" style="left:1206.5px;width:200px;text-align:center;top:458.7px;font-size:10.6px;line-height:10.6px;color:#888;">Start</div>
<svg class="a" style="left:1275px;top:455px;" width="15" height="16" viewBox="0 0 15 16"><path d="M0 0 L14 8 L0 16 Z" fill="#6a6a6a"/></svg>
<div class="a" style="left:948px;top:477px;width:100px;height:23px;background:#e1e1e1;border:1px solid #adadad;box-sizing:border-box;"></div>
<div class="a" style="left:908.0px;width:200px;text-align:center;top:484.2px;font-size:10.6px;line-height:10.6px;color:#000;">Frame</div>
<svg class="a" style="left:973px;top:480px;" width="17" height="16" viewBox="0 0 17 16"><path d="M1.3 6 V1.3 H6.5 M10 1.3 H15.2 V6 M15.2 9.5 V14.7 H10 M6.5 14.7 H1.3 V9.5" fill="none" stroke="#000" stroke-width="2.6"/></svg>
<div class="a" style="left:1053px;top:477px;width:101px;height:23px;background:#e1e1e1;border:1px solid #adadad;box-sizing:border-box;"></div>
<div class="a" style="left:1013.5px;width:200px;text-align:center;top:484.2px;font-size:10.6px;line-height:10.6px;color:#000;">Frame</div>
<svg class="a" style="left:1077px;top:480px;" width="17" height="17" viewBox="0 0 17 17"><circle cx="8.5" cy="8.5" r="7" fill="none" stroke="#000" stroke-width="2.4" stroke-dasharray="3.4 2.1"/></svg>
<div class="a" style="left:1159px;top:477px;width:100px;height:23px;background:#e1e1e1;border:1px solid #adadad;box-sizing:border-box;"></div>
<div class="a" style="left:1109.0px;width:200px;text-align:center;top:484.2px;font-size:10.6px;line-height:10.6px;color:#000;">Save GCode</div>
<div class="a" style="left:1264px;top:477px;width:100px;height:23px;background:#e1e1e1;border:1px solid #adadad;box-sizing:border-box;"></div>
<div class="a" style="left:1214.0px;width:200px;text-align:center;top:484.2px;font-size:10.6px;line-height:10.6px;color:#000;">Run GCode</div>
<div class="a" style="left:948px;top:503px;width:96px;height:22px;background:#e1e1e1;border:1px solid #adadad;box-sizing:border-box;"></div>
<div class="a" style="left:906.0px;width:200px;text-align:center;top:509.7px;font-size:10.6px;line-height:10.6px;color:#000;">Home</div>
<svg class="a" style="left:972px;top:506px;" width="16" height="16" viewBox="0 0 16 16"><path d="M0.8 8 L8 1.5 L15.2 8" fill="none" stroke="#000" stroke-width="2.4" stroke-linejoin="miter"/><path d="M3 7 V14.2 H13 V7" fill="none" stroke="#000" stroke-width="2.4"/><rect x="6.5" y="9.5" width="3" height="4.5" fill="#000"/></svg>
<div class="a" style="left:1052px;top:503px;width:97px;height:21px;background:#e1e1e1;border:1px solid #adadad;box-sizing:border-box;"></div>
<div class="a" style="left:1000.5px;width:200px;text-align:center;top:509.2px;font-size:10.6px;line-height:10.6px;color:#000;">Go to Origin</div>
<div class="a" style="left:1198px;top:509.7px;font-size:10.6px;line-height:10.6px;color:#000;">Start From:</div>
<div class="a" style="left:1260px;top:504px;width:105px;height:20px;background:#e1e1e1;border:1px solid #adadad;box-sizing:border-box;"></div>
<div class="a" style="left:1263px;top:509.7px;font-size:10.6px;line-height:10.6px;color:#000;">Absolute Coords</div>
<svg class="a" style="left:1349px;top:511px;" width="10" height="7" viewBox="0 0 10 7"><path d="M1 1 L5 5 L9 1" fill="none" stroke="#333" stroke-width="1.1"/></svg>
<div class="a" style="left:1262px;top:526px;width:100px;height:53px;background:#f0f0f0;border:1px solid #dcdcdc;box-sizing:border-box;"></div>
<div class="a" style="left:1205px;top:548.7px;font-size:10.6px;line-height:10.6px;color:#000;">Job Origin</div>
<svg class="a" style="left:1262px;top:529px;" width="14" height="14" viewBox="0 0 14 14"><circle cx="7" cy="7" r="6" fill="#fff" stroke="#d0d0d0" stroke-width="1"/></svg>
<svg class="a" style="left:1295px;top:529px;" width="14" height="14" viewBox="0 0 14 14"><circle cx="7" cy="7" r="6" fill="#fff" stroke="#d0d0d0" stroke-width="1"/></svg>
<svg class="a" style="left:1328px;top:529px;" width="14" height="14" viewBox="0 0 14 14"><circle cx="7" cy="7" r="6" fill="#fff" stroke="#d0d0d0" stroke-width="1"/><circle cx="7" cy="7" r="3.5" fill="#c2c2c2"/></svg>
<svg class="a" style="left:1262px;top:546px;" width="14" height="14" viewBox="0 0 14 14"><circle cx="7" cy="7" r="6" fill="#fff" stroke="#d0d0d0" stroke-width="1"/></svg>
<svg class="a" style="left:1295px;top:546px;" width="14" height="14" viewBox="0 0 14 14"><circle cx="7" cy="7" r="6" fill="#fff" stroke="#d0d0d0" stroke-width="1"/></svg>
<svg class="a" style="left:1328px;top:546px;" width="14" height="14" viewBox="0 0 14 14"><circle cx="7" cy="7" r="6" fill="#fff" stroke="#d0d0d0" stroke-width="1"/></svg>
<svg class="a" style="left:1262px;top:561px;" width="14" height="14" viewBox="0 0 14 14"><circle cx="7" cy="7" r="6" fill="#fff" stroke="#d0d0d0" stroke-width="1"/></svg>
<svg class="a" style="left:1295px;top:561px;" width="14" height="14" viewBox="0 0 14 14"><circle cx="7" cy="7" r="6" fill="#fff" stroke="#d0d0d0" stroke-width="1"/></svg>
<svg class="a" style="left:1328px;top:561px;" width="14" height="14" viewBox="0 0 14 14"><circle cx="7" cy="7" r="6" fill="#fff" stroke="#d0d0d0" stroke-width="1"/></svg>
<svg class="a" style="left:947px;top:568px;" width="16" height="10" viewBox="0 0 16 10"><rect x="6.5" y="1" width="9" height="8" rx="2" fill="#9c1212"/><rect x="0.7" y="0.7" width="7" height="8.6" rx="2.3" fill="#e4e4e4" stroke="#1a1a1a" stroke-width="1.3"/></svg>
<div class="a" style="left:968px;top:567.7px;font-size:10.6px;line-height:10.6px;color:#000;">Cut Selected Graphics</div>
<svg class="a" style="left:947px;top:588px;" width="16" height="10" viewBox="0 0 16 10"><rect x="6.5" y="1" width="9" height="8" rx="2" fill="#262626"/><rect x="0.7" y="0.7" width="7" height="8.6" rx="2.3" fill="#cdcdcd" stroke="#262626" stroke-width="1.3"/></svg>
<div class="a" style="left:968px;top:587.7px;font-size:10.6px;line-height:10.6px;color:#888;">Use Selection Origin</div>
<svg class="a" style="left:947px;top:611px;" width="16" height="10" viewBox="0 0 16 10"><rect x="0.6" y="1" width="9" height="8" rx="2" fill="#1fc11f" stroke="#138a13" stroke-width="0.8"/><rect x="8.6" y="0.7" width="6.8" height="8.6" rx="2.3" fill="#f6f6f6" stroke="#1a1a1a" stroke-width="1.3"/></svg>
<div class="a" style="left:968px;top:610.7px;font-size:10.6px;line-height:10.6px;color:#000;">Optimize Cut Path</div>
<div class="a" style="left:1157px;top:582px;width:207px;height:21px;background:#e1e1e1;border:1px solid #adadad;box-sizing:border-box;"></div>
<div class="a" style="left:1170.5px;width:200px;text-align:center;top:588.2px;font-size:10.6px;line-height:10.6px;color:#000;">Show Last Position</div>
<svg class="a" style="left:1206px;top:585px;" width="16" height="16" viewBox="0 0 16 16"><path d="M8 0 V4 M8 12 V16 M0 8 H4 M12 8 H16" stroke="#222" stroke-width="1.6"/><circle cx="8" cy="8" r="2.6" fill="#d01a1a"/></svg>
<div class="a" style="left:1157px;top:606px;width:207px;height:19px;background:#e1e1e1;border:1px solid #adadad;box-sizing:border-box;"></div>
<div class="a" style="left:1160.5px;width:200px;text-align:center;top:611.2px;font-size:10.6px;line-height:10.6px;color:#000;">Optimization Settings</div>
<div class="a" style="left:948px;top:629px;width:72px;height:20px;background:#e1e1e1;border:1px solid #adadad;box-sizing:border-box;"></div>
<div class="a" style="left:884.0px;width:200px;text-align:center;top:634.7px;font-size:10.6px;line-height:10.6px;color:#000;">Devices</div>
<div class="a" style="left:1200px;top:629px;width:164px;height:20px;background:#e1e1e1;border:1px solid #adadad;box-sizing:border-box;"></div>
<div class="a" style="left:1203px;top:634.7px;font-size:10.6px;line-height:10.6px;color:#000;">GRBL</div>
<svg class="a" style="left:1348px;top:636px;" width="10" height="7" viewBox="0 0 10 7"><path d="M1 1 L5 5 L9 1" fill="none" stroke="#333" stroke-width="1.1"/></svg>
<div class="a" style="left:946px;top:654px;width:420px;height:1px;background:#d9d9d9;"></div>
<div class="a" style="left:998px;top:655px;width:82px;height:17px;background:#e9e9e9;border:1px solid #d9d9d9;box-sizing:border-box;"></div>
<div class="a" style="left:1006px;top:659.7px;font-size:10.6px;line-height:10.6px;color:#000;">Library</div>
<div class="a" style="left:947px;top:653px;width:51px;height:22px;background:#ffffff;"></div>
<div class="a" style="left:870.0px;width:200px;text-align:center;top:660.0px;font-size:11px;line-height:11px;color:#000;">Laser</div>
<div class="a" style="left:1028px;top:629px;width:165px;height:20px;background:#cce4f7;border:1px solid #0078d7;box-sizing:border-box;"></div>
<div class="a" style="left:1032px;top:635.2px;font-size:10.6px;line-height:10.6px;color:#000;">COM4</div>
<svg class="a" style="left:1177px;top:636px;" width="10" height="7" viewBox="0 0 10 7"><path d="M1 1 L5 5 L9 1" fill="none" stroke="#333" stroke-width="1.1"/></svg>
<div class="a" style="left:0px;top:676px;width:1366px;height:29px;background:#f0f0f0;"></div>
<svg class="a" style="left:4px;top:678px;" width="2" height="24" viewBox="0 0 2 24"><rect x="0" y="0" width="2" height="2" fill="#cbcbcb"/><rect x="0" y="4" width="2" height="2" fill="#cbcbcb"/><rect x="0" y="8" width="2" height="2" fill="#cbcbcb"/><rect x="0" y="12" width="2" height="2" fill="#cbcbcb"/><rect x="0" y="16" width="2" height="2" fill="#cbcbcb"/><rect x="0" y="20" width="2" height="2" fill="#cbcbcb"/></svg>
<div class="a" style="left:10px;top:676px;width:26.5px;height:28px;background:#cde4f7;border:1px solid #99c9ef;box-sizing:border-box;"></div>
<div class="a" style="left:13.2px;top:679px;width:22.000000000000004px;height:22px;background:#000000;"></div>
<div class="a" style="left:9.2px;width:30px;text-align:center;top:685.0px;font-size:11.5px;line-height:11.5px;color:#fff;">00</div>
<div class="a" style="left:39.15px;top:679px;width:22.0px;height:22px;background:#0000ff;"></div>
<div class="a" style="left:35.1px;width:30px;text-align:center;top:685.0px;font-size:11.5px;line-height:11.5px;color:#fff;">01</div>
<div class="a" style="left:65.1px;top:679px;width:22.0px;height:22px;background:#ff0000;"></div>
<div class="a" style="left:61.1px;width:30px;text-align:center;top:685.0px;font-size:11.5px;line-height:11.5px;color:#fff;">02</div>
<div class="a" style="left:91.05px;top:679px;width:22.0px;height:22px;background:#00e000;"></div>
<div class="a" style="left:87.0px;width:30px;text-align:center;top:685.0px;font-size:11.5px;line-height:11.5px;color:#073;">03</div>
<div class="a" style="left:117.0px;top:679px;width:22.0px;height:22px;background:#d0d000;"></div>
<div class="a" style="left:113.0px;width:30px;text-align:center;top:685.0px;font-size:11.5px;line-height:11.5px;color:#222;">04</div>
<div class="a" style="left:142.95px;top:679px;width:22.0px;height:22px;background:#ff8000;"></div>
<div class="a" style="left:138.9px;width:30px;text-align:center;top:685.0px;font-size:11.5px;line-height:11.5px;color:#222;">05</div>
<div class="a" style="left:168.89999999999998px;top:679px;width:22.0px;height:22px;background:#00e0e0;"></div>
<div class="a" style="left:164.9px;width:30px;text-align:center;top:685.0px;font-size:11.5px;line-height:11.5px;color:#034;">06</div>
<div class="a" style="left:194.85px;top:679px;width:22.0px;height:22px;background:#ff00ff;"></div>
<div class="a" style="left:190.8px;width:30px;text-align:center;top:685.0px;font-size:11.5px;line-height:11.5px;color:#fff;">07</div>
<div class="a" style="left:220.79999999999998px;top:679px;width:22.0px;height:22px;background:#b4b4b4;"></div>
<div class="a" style="left:216.8px;width:30px;text-align:center;top:685.0px;font-size:11.5px;line-height:11.5px;color:#111;">08</div>
<div class="a" style="left:246.74999999999997px;top:679px;width:22.00000000000003px;height:22px;background:#0000a0;"></div>
<div class="a" style="left:242.8px;width:30px;text-align:center;top:685.0px;font-size:11.5px;line-height:11.5px;color:#fff;">09</div>
<div class="a" style="left:272.7px;top:679px;width:22.0px;height:22px;background:#a00000;"></div>
<div class="a" style="left:268.7px;width:30px;text-align:center;top:685.0px;font-size:11.5px;line-height:11.5px;color:#fff;">10</div>
<div class="a" style="left:298.65px;top:679px;width:22.0px;height:22px;background:#00a000;"></div>
<div class="a" style="left:294.6px;width:30px;text-align:center;top:685.0px;font-size:11.5px;line-height:11.5px;color:#fff;">11</div>
<div class="a" style="left:324.59999999999997px;top:679px;width:22.0px;height:22px;background:#a0a000;"></div>
<div class="a" style="left:320.6px;width:30px;text-align:center;top:685.0px;font-size:11.5px;line-height:11.5px;color:#111;">12</div>
<div class="a" style="left:350.54999999999995px;top:679px;width:22.0px;height:22px;background:#c08000;"></div>
<div class="a" style="left:346.5px;width:30px;text-align:center;top:685.0px;font-size:11.5px;line-height:11.5px;color:#111;">13</div>
<div class="a" style="left:376.5px;top:679px;width:22.0px;height:22px;background:#00a0ff;"></div>
<div class="a" style="left:372.5px;width:30px;text-align:center;top:685.0px;font-size:11.5px;line-height:11.5px;color:#fff;">14</div>
<div class="a" style="left:402.45px;top:679px;width:22.0px;height:22px;background:#a000a0;"></div>
<div class="a" style="left:398.4px;width:30px;text-align:center;top:685.0px;font-size:11.5px;line-height:11.5px;color:#fff;">15</div>
<div class="a" style="left:428.4px;top:679px;width:22.0px;height:22px;background:#808080;"></div>
<div class="a" style="left:424.4px;width:30px;text-align:center;top:685.0px;font-size:11.5px;line-height:11.5px;color:#fff;">16</div>
<div class="a" style="left:454.34999999999997px;top:679px;width:22.0px;height:22px;background:#7d87b9;"></div>
<div class="a" style="left:450.3px;width:30px;text-align:center;top:685.0px;font-size:11.5px;line-height:11.5px;color:#111;">17</div>
<div class="a" style="left:480.29999999999995px;top:679px;width:22.0px;height:22px;background:#bb7784;"></div>
<div class="a" style="left:476.3px;width:30px;text-align:center;top:685.0px;font-size:11.5px;line-height:11.5px;color:#111;">18</div>
<div class="a" style="left:506.25px;top:679px;width:22.0px;height:22px;background:#4a6fe3;"></div>
<div class="a" style="left:502.2px;width:30px;text-align:center;top:685.0px;font-size:11.5px;line-height:11.5px;color:#fff;">19</div>
<div class="a" style="left:532.2px;top:679px;width:22.0px;height:22px;background:#d33f6a;"></div>
<div class="a" style="left:528.2px;width:30px;text-align:center;top:685.0px;font-size:11.5px;line-height:11.5px;color:#fff;">20</div>
<div class="a" style="left:558.15px;top:679px;width:22.0px;height:22px;background:#8cd78c;"></div>
<div class="a" style="left:554.1px;width:30px;text-align:center;top:685.0px;font-size:11.5px;line-height:11.5px;color:#111;">21</div>
<div class="a" style="left:584.1px;top:679px;width:22.0px;height:22px;background:#f0b98d;"></div>
<div class="a" style="left:580.1px;width:30px;text-align:center;top:685.0px;font-size:11.5px;line-height:11.5px;color:#111;">22</div>
<div class="a" style="left:610.0500000000001px;top:679px;width:22.0px;height:22px;background:#f6c4e1;"></div>
<div class="a" style="left:606.1px;width:30px;text-align:center;top:685.0px;font-size:11.5px;line-height:11.5px;color:#111;">23</div>
<div class="a" style="left:636.0px;top:679px;width:22.0px;height:22px;background:#fa9ed4;"></div>
<div class="a" style="left:632.0px;width:30px;text-align:center;top:685.0px;font-size:11.5px;line-height:11.5px;color:#111;">24</div>
<div class="a" style="left:661.95px;top:679px;width:22.0px;height:22px;background:#500a78;"></div>
<div class="a" style="left:658.0px;width:30px;text-align:center;top:685.0px;font-size:11.5px;line-height:11.5px;color:#fff;">25</div>
<div class="a" style="left:687.9px;top:679px;width:22.0px;height:22px;background:#b45a00;"></div>
<div class="a" style="left:683.9px;width:30px;text-align:center;top:685.0px;font-size:11.5px;line-height:11.5px;color:#fff;">26</div>
<div class="a" style="left:713.85px;top:679px;width:22.0px;height:22px;background:#004754;"></div>
<div class="a" style="left:709.9px;width:30px;text-align:center;top:685.0px;font-size:11.5px;line-height:11.5px;color:#fff;">27</div>
<div class="a" style="left:739.8000000000001px;top:679px;width:22.0px;height:22px;background:#86fa88;"></div>
<div class="a" style="left:735.8px;width:30px;text-align:center;top:685.0px;font-size:11.5px;line-height:11.5px;color:#111;">28</div>
<div class="a" style="left:765.75px;top:679px;width:22.0px;height:22px;background:#ffdb66;"></div>
<div class="a" style="left:761.8px;width:30px;text-align:center;top:685.0px;font-size:11.5px;line-height:11.5px;color:#111;">29</div>
<div class="a" style="left:794px;top:677px;width:1px;height:26px;background:#d6d6d6;"></div>
<div class="a" style="left:799px;top:679px;width:22px;height:22px;background:#f36926;"></div>
<div class="a" style="left:795.0px;width:30px;text-align:center;top:685.0px;font-size:11.5px;line-height:11.5px;color:#111;">T1</div>
<div class="a" style="left:825px;top:679px;width:22px;height:22px;background:#0c96d9;"></div>
<div class="a" style="left:821.0px;width:30px;text-align:center;top:685.0px;font-size:11.5px;line-height:11.5px;color:#fff;">T2</div>
<div class="a" style="left:0px;top:705px;width:1366px;height:23px;background:#f0f0f0;"></div>
<svg class="a" style="left:2px;top:713px;" width="16" height="10" viewBox="0 0 16 10"><rect x="0.6" y="1" width="9" height="8" rx="2" fill="#1fc11f" stroke="#138a13" stroke-width="0.8"/><rect x="8.6" y="0.7" width="6.8" height="8.6" rx="2.3" fill="#f6f6f6" stroke="#1a1a1a" stroke-width="1.3"/></svg>
<div class="a" style="left:23px;top:713.7px;font-size:10.6px;line-height:10.6px;color:#000;">Move</div>
<div class="a" style="left:57px;top:708px;width:1px;height:18px;background:#dadada;"></div>
<svg class="a" style="left:62px;top:713px;" width="16" height="10" viewBox="0 0 16 10"><rect x="0.6" y="1" width="9" height="8" rx="2" fill="#1fc11f" stroke="#138a13" stroke-width="0.8"/><rect x="8.6" y="0.7" width="6.8" height="8.6" rx="2.3" fill="#f6f6f6" stroke="#1a1a1a" stroke-width="1.3"/></svg>
<div class="a" style="left:83px;top:713.7px;font-size:10.6px;line-height:10.6px;color:#000;">Size</div>
<div class="a" style="left:110px;top:708px;width:1px;height:18px;background:#dadada;"></div>
<svg class="a" style="left:115px;top:713px;" width="16" height="10" viewBox="0 0 16 10"><rect x="0.6" y="1" width="9" height="8" rx="2" fill="#1fc11f" stroke="#138a13" stroke-width="0.8"/><rect x="8.6" y="0.7" width="6.8" height="8.6" rx="2.3" fill="#f6f6f6" stroke="#1a1a1a" stroke-width="1.3"/></svg>
<div class="a" style="left:136px;top:713.7px;font-size:10.6px;line-height:10.6px;color:#000;">Rotate</div>
<div class="a" style="left:178px;top:708px;width:1px;height:18px;background:#dadada;"></div>
<svg class="a" style="left:182px;top:713px;" width="16" height="10" viewBox="0 0 16 10"><rect x="0.6" y="1" width="9" height="8" rx="2" fill="#1fc11f" stroke="#138a13" stroke-width="0.8"/><rect x="8.6" y="0.7" width="6.8" height="8.6" rx="2.3" fill="#f6f6f6" stroke="#1a1a1a" stroke-width="1.3"/></svg>
<div class="a" style="left:203px;top:713.7px;font-size:10.6px;line-height:10.6px;color:#000;">Shear</div>
<div class="a" style="left:247px;top:708px;width:1px;height:18px;background:#dadada;"></div>
<div class="a" style="left:252px;top:713.4px;font-size:11.2px;line-height:11.2px;color:#000;">x: 541.00, y: 116.00 mm</div>
<div class="a" style="left:677px;top:708px;width:1px;height:18px;background:#dadada;"></div>
<div class="a" style="left:1192px;top:708px;width:1px;height:18px;background:#dadada;"></div>
<div class="a" style="left:0px;top:728px;width:1366px;height:40px;background:#1f1f1f;"></div>
<div class="a" style="left:48px;top:728px;width:288px;height:40px;background:#2c2c2c;border:1px solid #4a4a4a;box-sizing:border-box;"></div>
<svg class="a" style="left:16px;top:740px;" width="17" height="17" viewBox="0 0 17 17"><path d="M0 2.2 L6.8 1.3 V7.8 H0 Z M7.8 1.2 L16.5 0 V7.8 H7.8 Z M0 8.8 H6.8 V15.3 L0 14.4 Z M7.8 8.8 H16.5 V16.6 L7.8 15.4 Z" fill="#fff"/></svg>
<svg class="a" style="left:60px;top:739px;" width="17" height="18" viewBox="0 0 17 18"><circle cx="10.5" cy="6.5" r="5.5" fill="none" stroke="#ddd" stroke-width="1.5"/><path d="M6.5 10.5 L1 16.5" stroke="#ddd" stroke-width="1.6"/></svg>
<div class="a" style="left:88px;top:740.5px;font-size:15px;line-height:15px;color:#d8d8d8;">Procurar</div>
<svg class="a" style="left:270px;top:728px;" width="66" height="40" viewBox="0 0 66 40"><path d="M0 8 L23 10 L24 40 L3 40 Z" fill="#d8b084"/><path d="M0 7.5 L23 9.5 V14 L0 12.5 Z" fill="#efe4d4"/><path d="M23 13 H44 V40 H24 Z" fill="#d2a472"/><path d="M42 4.5 L66 1.5 V40 H42 Z" fill="#e4c59c"/><path d="M42 4.5 L66 1.5 V10 L42 11 Z" fill="#eadbc6"/><ellipse cx="29" cy="19" rx="1.5" ry="2.5" fill="#6a3a20"/><ellipse cx="37" cy="21" rx="1.5" ry="2.5" fill="#6a3a20"/><ellipse cx="45" cy="19" rx="1.5" ry="2.5" fill="#6a3a20"/><rect x="35" y="23" width="4" height="8" fill="#f2ece4"/><ellipse cx="58" cy="21" rx="3.5" ry="7" fill="#4f9a2a"/><ellipse cx="43" cy="23" rx="2.5" ry="3.5" fill="#5aa832"/><ellipse cx="22" cy="37" rx="5" ry="3" fill="#4f9a2a"/><ellipse cx="47" cy="36" rx="2.5" ry="4" fill="#4f9a2a"/><rect x="34" y="33" width="4" height="7" fill="#6fb3d0"/></svg>
<svg class="a" style="left:351px;top:737px;" width="18" height="18" viewBox="0 0 18 18"><path d="M3 2 H15 M3 16 H15" stroke="#eee" stroke-width="1.5"/><rect x="1.5" y="5" width="10" height="8" fill="none" stroke="#eee" stroke-width="1.5"/><path d="M15 5 V7 M15 9 V13" stroke="#eee" stroke-width="1.5"/></svg>
<svg class="a" style="left:398px;top:735px;" width="26" height="26" viewBox="0 0 26 26"><defs><linearGradient id="eg" x1="1" y1="0" x2="0" y2="1"><stop offset="0" stop-color="#5ad96a"/><stop offset="0.45" stop-color="#26a8e0"/><stop offset="1" stop-color="#1660c4"/></linearGradient></defs><circle cx="13" cy="13" r="12" fill="url(#eg)"/><path d="M6 14.5 Q6 9.5 11 9.5 Q15.5 9.5 15.5 13.5 Q12.5 12.5 10.5 14.5 Q9.5 17.5 12.5 19.5 Q7 19.5 6 14.5 Z" fill="#1c2a3a"/></svg>
<svg class="a" style="left:448px;top:737px;" width="25" height="22" viewBox="0 0 25 22"><path d="M1 2 H9 L11 4 H24 V20 H1 Z" fill="#e8b53c"/><rect x="1" y="5.5" width="23" height="14.5" fill="#f9d66a"/><path d="M6 11 H19 V20 H15.5 V15 H9.5 V20 H6 Z" fill="#4a8fd8"/></svg>
<div class="a" style="left:440px;top:766px;width:41px;height:2px;background:#6fa9d8;"></div>
<svg class="a" style="left:496px;top:735px;" width="25" height="25" viewBox="0 0 25 25"><path d="M7 8 V3 H18 V8" fill="none" stroke="#5aa8e0" stroke-width="1.8"/><rect x="1" y="6" width="23" height="18" rx="2.5" fill="#f4f4f4"/><rect x="8" y="11" width="4" height="4" fill="#e8542a"/><rect x="13" y="11" width="4" height="4" fill="#7ab52a"/><rect x="8" y="16" width="4" height="4" fill="#2aa2e0"/><rect x="13" y="16" width="4" height="4" fill="#f2b81e"/></svg>
<svg class="a" style="left:545px;top:735px;" width="36" height="30" viewBox="0 0 36 30"><path d="M1 9 L13 1 L25 9 V23 H1 Z" fill="#1d7ad6"/><path d="M1 9 L13 17 L25 9" fill="#49a7f2"/><circle cx="25" cy="21" r="8.5" fill="#333" stroke="#1f1f1f" stroke-width="1.5"/><text x="25" y="25.5" font-size="12" text-anchor="middle" fill="#fff" font-family="Liberation Sans">25</text></svg>
<svg class="a" style="left:595px;top:736px;" width="24" height="24" viewBox="0 0 24 24"><circle cx="12" cy="12" r="11.5" fill="#db4437"/><path d="M12 12 L2 6.5 A11.5 11.5 0 0 0 9 23.2 Z" fill="#0f9d58"/><path d="M12 12 L9 23.2 A11.5 11.5 0 0 0 23.2 9 L12 12 Z" fill="#f4b400"/><path d="M12 0.5 A11.5 11.5 0 0 0 2 6.5 L12 12 Z" fill="#db4437"/><circle cx="12" cy="12" r="5.2" fill="#fff"/><circle cx="12" cy="12" r="4" fill="#4285f4"/></svg>
<div class="a" style="left:587px;top:766px;width:41px;height:2px;background:#6fa9d8;"></div>
<div class="a" style="left:632px;top:729px;width:48px;height:39px;background:#3b3b3b;"></div>
<div class="a" style="left:632px;top:766px;width:48px;height:2px;background:#7ab3e0;"></div>
<svg class="a" style="left:641px;top:736px;" width="27" height="27" viewBox="0 0 24 24"><defs><linearGradient id="lg2" x1="0" y1="0" x2="1" y2="0"><stop offset="0" stop-color="#7a0f1e"/><stop offset="0.7" stop-color="#8e1525"/><stop offset="1" stop-color="#d4202c"/></linearGradient></defs><rect x="0" y="0" width="24" height="24" fill="url(#lg2)"/><path d="M0 1.5 H10 Q4 2 2 4 Z" fill="#2a0508" opacity="0.7"/><path d="M4 7 Q12 0.5 19 6.5" fill="none" stroke="#f6e6e6" stroke-width="2.4" stroke-linecap="round"/><path d="M5 18.5 Q5 13 10 12 Q15 11.5 16.5 15 Q18 19 16.5 24 H9.5 Q11 21 9.5 19.5 Q7.5 21 5 18.5 Z" fill="#f5eaea"/><path d="M7 17 Q9 15.5 11 16.5" stroke="#8e1525" stroke-width="1" fill="none"/></svg>
<svg class="a" style="left:926px;top:735px;" width="28" height="26" viewBox="0 0 28 26"><path d="M2.5 9.5 Q9 11 12.5 5 Q14 2 12 0.5 Q17.5 2 17.5 8 Q17 14 10 14.5 Q5 14.5 2.5 9.5 Z" fill="#f1b84a"/><path d="M3 24 Q1 24 1 20.5 Q1 16.5 5 16 Q7 10.5 13 10.5 Q19 10.5 21 15.5 Q26 15.5 26 20 Q26 24 23 24 Z" fill="#d6e2f4"/><path d="M5 16 Q8 13 13 13" stroke="#b8cbe8" stroke-width="1" fill="none"/></svg>
<div class="a" style="left:960px;top:742.0px;font-size:14px;line-height:14px;color:#e8e8e8;">25°C</div>
<div class="a" style="left:997px;top:742.0px;font-size:14px;line-height:14px;color:#e8e8e8;">Ger. Nublado</div>
<svg class="a" style="left:1104px;top:743px;" width="14" height="9" viewBox="0 0 14 9"><path d="M1 8 L7 2 L13 8" fill="none" stroke="#eee" stroke-width="1.5"/></svg>
<svg class="a" style="left:1129px;top:740px;" width="15" height="17" viewBox="0 0 15 17"><rect x="1" y="4" width="9" height="9" rx="1.5" fill="none" stroke="#eee" stroke-width="1.4"/><path d="M10 7 L14 5 V12 L10 10" fill="none" stroke="#eee" stroke-width="1.3"/><path d="M3 1 H8 M3 16 H8" stroke="#eee" stroke-width="1.2"/></svg>
<svg class="a" style="left:1150px;top:739px;" width="20" height="20" viewBox="0 0 20 20"><path d="M3 15 Q0 15 0 11 Q0 8 4 8 Q5 4 9 4 Q13 4 14 8 Q17 8 17 11 Q17 15 14 15 Z" fill="#bbb"/><circle cx="14" cy="14" r="5" fill="#e02b2b"/><path d="M12 12 L16 16 M16 12 L12 16" stroke="#fff" stroke-width="1.3"/></svg>
<svg class="a" style="left:1175px;top:743px;" width="16" height="10" viewBox="0 0 16 10"><rect x="0.75" y="0.75" width="13" height="8.5" fill="none" stroke="#eee" stroke-width="1.4"/><rect x="2.5" y="2.5" width="5" height="5" fill="#eee"/><rect x="14" y="3" width="2" height="4" fill="#eee"/></svg>
<svg class="a" style="left:1200px;top:740px;" width="16" height="16" viewBox="0 0 16 16"><path d="M1 15 A14 14 0 0 1 15 1 M4 15 A11 11 0 0 1 15 4 M7 15 A8 8 0 0 1 15 7 M10 15 A5 5 0 0 1 15 10" fill="none" stroke="#ddd" stroke-width="1.2"/><circle cx="14" cy="14" r="1.8" fill="#eee"/></svg>
<svg class="a" style="left:1222px;top:739px;" width="18" height="18" viewBox="0 0 18 18"><path d="M1 6 H4 L9 2 V16 L4 12 H1 Z" fill="none" stroke="#eee" stroke-width="1.3"/><path d="M11.5 6 Q13 9 11.5 12 M14 4 Q17 9 14 14" fill="none" stroke="#eee" stroke-width="1.3"/></svg>
<div class="a" style="left:1247.5px;width:60px;text-align:center;top:734.0px;font-size:12px;line-height:12px;color:#eeeeee;">22:06</div>
<div class="a" style="left:1238.0px;width:80px;text-align:center;top:752.5px;font-size:12px;line-height:12px;color:#eeeeee;">12/10/2023</div>
<svg class="a" style="left:1322px;top:738px;" width="30" height="26" viewBox="0 0 30 26"><path d="M2 2 H22 V16 H10 L5 20 V16 H2 Z" fill="#eee"/><path d="M6 6 H18 M6 9 H18 M6 12 H14" stroke="#1f1f1f" stroke-width="1.2"/><circle cx="20" cy="18" r="7" fill="#333" stroke="#1f1f1f" stroke-width="1.5"/><text x="20" y="22.5" font-size="12" text-anchor="middle" fill="#fff" font-family="Liberation Sans">2</text></svg>
<div class="a" style="left:1030px;top:651px;width:167px;height:28px;background:rgba(0,0,0,0.28);filter:blur(1.5px);"></div>
<div class="a" style="left:1028px;top:649px;width:165px;height:27px;background:#ffffff;border:1px solid #a0a0a0;box-sizing:border-box;"></div>
<div class="a" style="left:1032px;top:650.9px;font-size:10.6px;line-height:10.6px;color:#000;">(Choose)</div>
<div class="a" style="left:1029px;top:663px;width:163px;height:12px;background:#0078d7;"></div>
<div class="a" style="left:1032px;top:663.9px;font-size:10.6px;line-height:10.6px;color:#ffffff;">COM4</div>
</body></html>
